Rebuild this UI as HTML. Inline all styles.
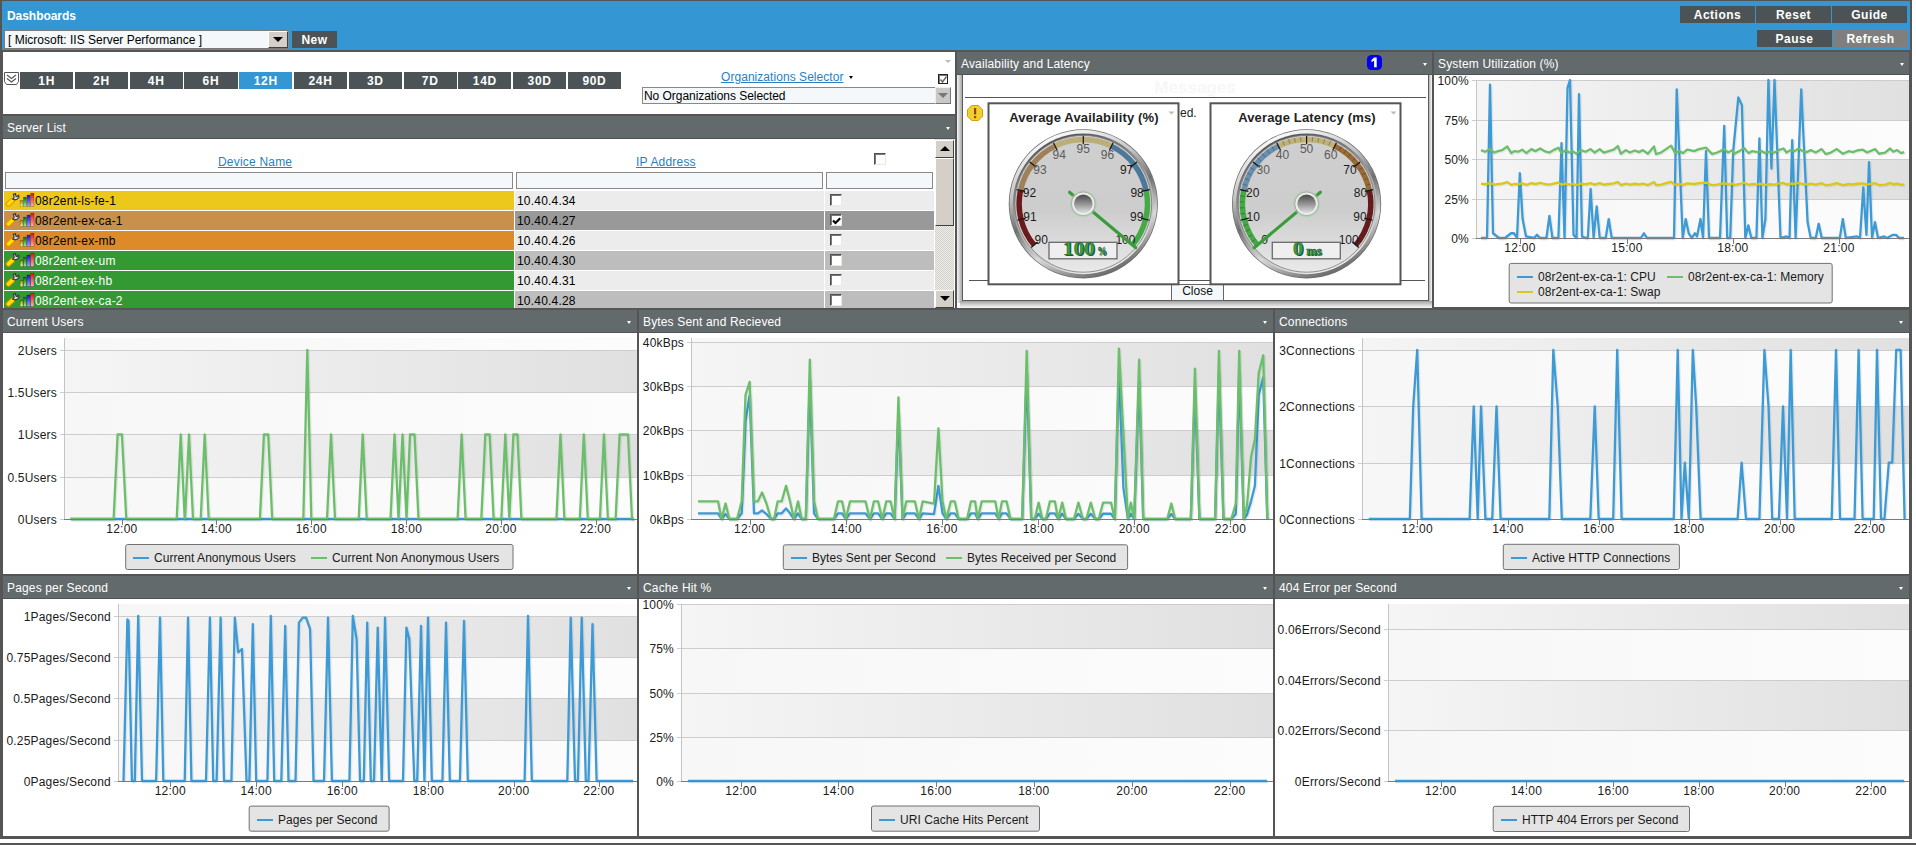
<!DOCTYPE html><html><head><meta charset="utf-8"><style>
*{margin:0;padding:0;box-sizing:border-box}
html,body{width:1916px;height:845px;overflow:hidden;background:#fff;font-family:"Liberation Sans",sans-serif;font-size:12px;color:#000}
.hdr{position:absolute;background:#636a6c;color:#fff;font-size:12px;line-height:24px;padding-left:4px;white-space:nowrap;letter-spacing:0.15px;border-bottom:1px solid #4f5355}
.tri{position:absolute;width:0;height:0;border-left:2.5px solid transparent;border-right:2.5px solid transparent;border-top:3px solid #fff}
.btn{position:absolute;background:#4b5356;color:#fff;font-weight:bold;font-size:12px;text-align:center;white-space:nowrap}
.cb{position:absolute;width:12px;height:12px;border:1px solid;border-color:#505050 #ece9e2 #ece9e2 #505050;box-shadow:inset 1px 1px 0 #7a7a7a;background:#fff}
</style></head><body><div style="position:absolute;left:0;top:0;width:1912px;height:839px;background:#555555"></div><div style="position:absolute;left:0;top:843px;width:1916px;height:2px;background:#555555"></div><div style="position:absolute;left:2px;top:1px;width:1908px;height:49px;background:#3497d4"></div><div style="position:absolute;left:7px;top:9px;white-space:nowrap;color:#fff;font-weight:bold;font-size:12px;line-height:14px;letter-spacing:-0.05px">Dashboards</div><div style="position:absolute;left:4px;top:30px;width:285px;height:19px;background:#f4f8fa;border:1px solid #7a7a7a;border-right-color:#888;"></div><div style="position:absolute;left:8px;top:33px;white-space:nowrap;font-size:12px;line-height:14px;color:#000;letter-spacing:0px">[ Microsoft: IIS Server Performance ]</div><div style="position:absolute;left:268px;top:31px;width:20px;height:17px;background:#d4d0c8;border:1px solid;border-color:#fff #404040 #404040 #fff"></div><div style="position:absolute;left:273px;top:37px;width:0;height:0;border-left:5px solid transparent;border-right:5px solid transparent;border-top:5px solid #000"></div><div class="btn" style="left:292px;top:31px;width:45px;height:17px;line-height:19px;letter-spacing:0.5px">New</div><div class="btn" style="left:1680px;top:6px;width:75px;height:17px;line-height:19px;font-size:12px;letter-spacing:0.5px">Actions</div><div class="btn" style="left:1756px;top:6px;width:75px;height:17px;line-height:19px;font-size:12px;letter-spacing:0.5px">Reset</div><div class="btn" style="left:1832px;top:6px;width:75px;height:17px;line-height:19px;font-size:12px;letter-spacing:0.5px">Guide</div><div class="btn" style="left:1757px;top:30px;width:75px;height:17px;line-height:19px;font-size:12px;letter-spacing:0.5px">Pause</div><div class="btn" style="left:1833px;top:30px;width:75px;height:17px;line-height:19px;font-size:12px;letter-spacing:0.5px;background:#7f7f7f">Refresh</div><div style="position:absolute;left:3px;top:52px;width:952px;height:62px;background:#fff"></div><svg style="position:absolute;left:4px;top:72px" width="15" height="14" viewBox="0 0 15 14"><path d="M0.5 0.5 H14.5 V9.5 L12.5 12.5 H2.5 L0.5 9.5 Z" fill="#fff" stroke="#555" stroke-width="1"/><path d="M3 3 L7.5 6.5 L12 3 M3 6.5 L7.5 10 L12 6.5" fill="none" stroke="#555" stroke-width="1.2"/></svg><div class="btn" style="left:20.0px;top:72px;width:53.3px;height:17px;line-height:19px;background:#4b5356;font-size:12px;letter-spacing:0.7px">1H</div><div class="btn" style="left:74.8px;top:72px;width:53.3px;height:17px;line-height:19px;background:#4b5356;font-size:12px;letter-spacing:0.7px">2H</div><div class="btn" style="left:129.6px;top:72px;width:53.3px;height:17px;line-height:19px;background:#4b5356;font-size:12px;letter-spacing:0.7px">4H</div><div class="btn" style="left:184.3px;top:72px;width:53.3px;height:17px;line-height:19px;background:#4b5356;font-size:12px;letter-spacing:0.7px">6H</div><div class="btn" style="left:239.1px;top:72px;width:53.3px;height:17px;line-height:19px;background:#3497d4;font-size:12px;letter-spacing:0.7px">12H</div><div class="btn" style="left:293.9px;top:72px;width:53.3px;height:17px;line-height:19px;background:#4b5356;font-size:12px;letter-spacing:0.7px">24H</div><div class="btn" style="left:348.7px;top:72px;width:53.3px;height:17px;line-height:19px;background:#4b5356;font-size:12px;letter-spacing:0.7px">3D</div><div class="btn" style="left:403.5px;top:72px;width:53.3px;height:17px;line-height:19px;background:#4b5356;font-size:12px;letter-spacing:0.7px">7D</div><div class="btn" style="left:458.2px;top:72px;width:53.3px;height:17px;line-height:19px;background:#4b5356;font-size:12px;letter-spacing:0.7px">14D</div><div class="btn" style="left:513.0px;top:72px;width:53.3px;height:17px;line-height:19px;background:#4b5356;font-size:12px;letter-spacing:0.7px">30D</div><div class="btn" style="left:567.8px;top:72px;width:53.3px;height:17px;line-height:19px;background:#4b5356;font-size:12px;letter-spacing:0.7px">90D</div><div style="position:absolute;left:721px;top:70px;white-space:nowrap;color:#2a7fc0;font-size:12px;line-height:14px;letter-spacing:0.05px"><u>Organizations Selector</u></div><div style="position:absolute;left:849px;top:76px;width:0;height:0;border-left:2.5px solid transparent;border-right:2.5px solid transparent;border-top:3px solid #000"></div><div style="position:absolute;left:945px;top:60px;width:0;height:0;border-left:3px solid transparent;border-right:3px solid transparent;border-top:3px solid #bbb"></div><div class="cb" style="left:938px;top:74px;width:10px;height:10px;border-color:#222"></div><svg style="position:absolute;left:939px;top:75px" width="9" height="9"><path d="M1.5 4.5 L3.5 7 L7.5 1.5" fill="none" stroke="#666" stroke-width="1.4"/></svg><div style="position:absolute;left:642px;top:87px;width:294px;height:17px;background:#f4f8fa;border:1px solid #888"></div><div style="position:absolute;left:644px;top:89px;white-space:nowrap;font-size:12px;line-height:14px;letter-spacing:-0.05px">No Organizations Selected</div><div style="position:absolute;left:935px;top:87px;width:16px;height:17px;background:#c8c8c8;border:1px solid;border-color:#eee #777 #777 #eee"></div><div style="position:absolute;left:938px;top:93px;width:0;height:0;border-left:5px solid transparent;border-right:5px solid transparent;border-top:5px solid #777"></div><div class="hdr" style="left:3px;top:116px;width:952px;height:23px">Server List</div><div class="tri" style="left:946px;top:127px"></div><div style="position:absolute;left:3px;top:139px;width:952px;height:169px;background:#fff"></div><div style="position:absolute;left:218px;top:155px;white-space:nowrap;color:#2a7fc0;font-size:12px;line-height:14px;letter-spacing:0.2px"><u>Device Name</u></div><div style="position:absolute;left:636px;top:155px;white-space:nowrap;color:#2a7fc0;font-size:12px;line-height:14px;letter-spacing:0.2px"><u>IP Address</u></div><div class="cb" style="left:874px;top:153px;width:12px;height:12px"></div><div style="position:absolute;left:5px;top:172px;width:508px;height:17px;background:#f4f8fa;border:1px solid #888"></div><div style="position:absolute;left:516px;top:172px;width:307px;height:17px;background:#f4f8fa;border:1px solid #888"></div><div style="position:absolute;left:826px;top:172px;width:107px;height:17px;background:#f4f8fa;border:1px solid #888"></div><svg width="0" height="0" style="position:absolute"><defs><linearGradient id="ibY" x1="0" x2="0" y1="0" y2="1"><stop offset="0" stop-color="#9a9a00"/><stop offset="1" stop-color="#ffff90"/></linearGradient><linearGradient id="ibG" x1="0" x2="0" y1="0" y2="1"><stop offset="0" stop-color="#006a00"/><stop offset="1" stop-color="#a0f0a0"/></linearGradient><linearGradient id="ibB" x1="0" x2="0" y1="0" y2="1"><stop offset="0" stop-color="#1010e0"/><stop offset="1" stop-color="#a0a8ff"/></linearGradient><linearGradient id="ibR" x1="0" x2="0" y1="0" y2="1"><stop offset="0" stop-color="#e01010"/><stop offset="1" stop-color="#ffb0b0"/></linearGradient></defs></svg><div style="position:absolute;left:4px;top:191px;width:510px;height:19px;background:#ecc81c"></div><svg style="position:absolute;left:3px;top:188px" width="32" height="22" viewBox="0 0 32 22"><path d="M5.4 15.9 L9.2 12.5" stroke="#f08a00" stroke-width="5.4" stroke-linecap="round"/><path d="M5.4 15.9 L9.2 12.5" stroke="#ffe400" stroke-width="3.4" stroke-linecap="round"/><path d="M9.6 11.2 L11.2 9.6 L10.4 6.4 L12.6 5.6 L12.8 8 L14.2 8.6 L15.6 7.2 L16 9.4 L13.8 11.4 L11.4 11.8 Z" fill="#e0e0e0" stroke="#3a3a3a" stroke-width="1.2" stroke-linejoin="round"/><rect x="17.2" y="12.6" width="2.7" height="5.8" fill="url(#ibY)" stroke="rgba(0,0,0,0.35)" stroke-width="0.6"/><rect x="20.5" y="9.2" width="2.9" height="9.2" fill="url(#ibG)" stroke="rgba(0,0,0,0.35)" stroke-width="0.6"/><rect x="24" y="7.1" width="3.2" height="11.3" fill="url(#ibB)" stroke="rgba(0,0,0,0.35)" stroke-width="0.6"/><rect x="27.7" y="5.2" width="3.3" height="13.2" fill="url(#ibR)" stroke="rgba(0,0,0,0.35)" stroke-width="0.6"/></svg><div style="position:absolute;left:35px;top:194px;white-space:nowrap;color:#000;font-size:12px;line-height:15px;letter-spacing:0.2px">08r2ent-ls-fe-1</div><div style="position:absolute;left:515px;top:191px;width:309px;height:19px;background:#ececec"></div><div style="position:absolute;left:517px;top:194px;white-space:nowrap;font-size:12px;line-height:15px;letter-spacing:0.2px">10.40.4.34</div><div style="position:absolute;left:825px;top:191px;width:109px;height:19px;background:#ececec"></div><div class="cb" style="left:830px;top:194px;width:12px;height:12px"></div><div style="position:absolute;left:4px;top:211px;width:510px;height:19px;background:#c8904a"></div><svg style="position:absolute;left:3px;top:208px" width="32" height="22" viewBox="0 0 32 22"><path d="M5.4 15.9 L9.2 12.5" stroke="#f08a00" stroke-width="5.4" stroke-linecap="round"/><path d="M5.4 15.9 L9.2 12.5" stroke="#ffe400" stroke-width="3.4" stroke-linecap="round"/><path d="M9.6 11.2 L11.2 9.6 L10.4 6.4 L12.6 5.6 L12.8 8 L14.2 8.6 L15.6 7.2 L16 9.4 L13.8 11.4 L11.4 11.8 Z" fill="#e0e0e0" stroke="#3a3a3a" stroke-width="1.2" stroke-linejoin="round"/><rect x="17.2" y="12.6" width="2.7" height="5.8" fill="url(#ibY)" stroke="rgba(0,0,0,0.35)" stroke-width="0.6"/><rect x="20.5" y="9.2" width="2.9" height="9.2" fill="url(#ibG)" stroke="rgba(0,0,0,0.35)" stroke-width="0.6"/><rect x="24" y="7.1" width="3.2" height="11.3" fill="url(#ibB)" stroke="rgba(0,0,0,0.35)" stroke-width="0.6"/><rect x="27.7" y="5.2" width="3.3" height="13.2" fill="url(#ibR)" stroke="rgba(0,0,0,0.35)" stroke-width="0.6"/></svg><div style="position:absolute;left:35px;top:214px;white-space:nowrap;color:#000;font-size:12px;line-height:15px;letter-spacing:0.2px">08r2ent-ex-ca-1</div><div style="position:absolute;left:515px;top:211px;width:309px;height:19px;background:#999999"></div><div style="position:absolute;left:517px;top:214px;white-space:nowrap;font-size:12px;line-height:15px;letter-spacing:0.2px">10.40.4.27</div><div style="position:absolute;left:825px;top:211px;width:109px;height:19px;background:#999999"></div><div class="cb" style="left:830px;top:214px;width:12px;height:12px"></div><svg style="position:absolute;left:832px;top:216px" width="10" height="10"><path d="M1 4.5 L3.5 7 L8.2 2.2" fill="none" stroke="#000" stroke-width="2.2"/></svg><div style="position:absolute;left:4px;top:231px;width:510px;height:19px;background:#dc8a2a"></div><svg style="position:absolute;left:3px;top:228px" width="32" height="22" viewBox="0 0 32 22"><path d="M5.4 15.9 L9.2 12.5" stroke="#f08a00" stroke-width="5.4" stroke-linecap="round"/><path d="M5.4 15.9 L9.2 12.5" stroke="#ffe400" stroke-width="3.4" stroke-linecap="round"/><path d="M9.6 11.2 L11.2 9.6 L10.4 6.4 L12.6 5.6 L12.8 8 L14.2 8.6 L15.6 7.2 L16 9.4 L13.8 11.4 L11.4 11.8 Z" fill="#e0e0e0" stroke="#3a3a3a" stroke-width="1.2" stroke-linejoin="round"/><rect x="17.2" y="12.6" width="2.7" height="5.8" fill="url(#ibY)" stroke="rgba(0,0,0,0.35)" stroke-width="0.6"/><rect x="20.5" y="9.2" width="2.9" height="9.2" fill="url(#ibG)" stroke="rgba(0,0,0,0.35)" stroke-width="0.6"/><rect x="24" y="7.1" width="3.2" height="11.3" fill="url(#ibB)" stroke="rgba(0,0,0,0.35)" stroke-width="0.6"/><rect x="27.7" y="5.2" width="3.3" height="13.2" fill="url(#ibR)" stroke="rgba(0,0,0,0.35)" stroke-width="0.6"/></svg><div style="position:absolute;left:35px;top:234px;white-space:nowrap;color:#000;font-size:12px;line-height:15px;letter-spacing:0.2px">08r2ent-ex-mb</div><div style="position:absolute;left:515px;top:231px;width:309px;height:19px;background:#ececec"></div><div style="position:absolute;left:517px;top:234px;white-space:nowrap;font-size:12px;line-height:15px;letter-spacing:0.2px">10.40.4.26</div><div style="position:absolute;left:825px;top:231px;width:109px;height:19px;background:#ececec"></div><div class="cb" style="left:830px;top:234px;width:12px;height:12px"></div><div style="position:absolute;left:4px;top:251px;width:510px;height:19px;background:#339933"></div><svg style="position:absolute;left:3px;top:248px" width="32" height="22" viewBox="0 0 32 22"><path d="M5.4 15.9 L9.2 12.5" stroke="#f08a00" stroke-width="5.4" stroke-linecap="round"/><path d="M5.4 15.9 L9.2 12.5" stroke="#ffe400" stroke-width="3.4" stroke-linecap="round"/><path d="M9.6 11.2 L11.2 9.6 L10.4 6.4 L12.6 5.6 L12.8 8 L14.2 8.6 L15.6 7.2 L16 9.4 L13.8 11.4 L11.4 11.8 Z" fill="#e0e0e0" stroke="#3a3a3a" stroke-width="1.2" stroke-linejoin="round"/><rect x="17.2" y="12.6" width="2.7" height="5.8" fill="url(#ibY)" stroke="rgba(0,0,0,0.35)" stroke-width="0.6"/><rect x="20.5" y="9.2" width="2.9" height="9.2" fill="url(#ibG)" stroke="rgba(0,0,0,0.35)" stroke-width="0.6"/><rect x="24" y="7.1" width="3.2" height="11.3" fill="url(#ibB)" stroke="rgba(0,0,0,0.35)" stroke-width="0.6"/><rect x="27.7" y="5.2" width="3.3" height="13.2" fill="url(#ibR)" stroke="rgba(0,0,0,0.35)" stroke-width="0.6"/></svg><div style="position:absolute;left:35px;top:254px;white-space:nowrap;color:#fff;font-size:12px;line-height:15px;letter-spacing:0.2px">08r2ent-ex-um</div><div style="position:absolute;left:515px;top:251px;width:309px;height:19px;background:#bdbdbd"></div><div style="position:absolute;left:517px;top:254px;white-space:nowrap;font-size:12px;line-height:15px;letter-spacing:0.2px">10.40.4.30</div><div style="position:absolute;left:825px;top:251px;width:109px;height:19px;background:#bdbdbd"></div><div class="cb" style="left:830px;top:254px;width:12px;height:12px"></div><div style="position:absolute;left:4px;top:271px;width:510px;height:19px;background:#339933"></div><svg style="position:absolute;left:3px;top:268px" width="32" height="22" viewBox="0 0 32 22"><path d="M5.4 15.9 L9.2 12.5" stroke="#f08a00" stroke-width="5.4" stroke-linecap="round"/><path d="M5.4 15.9 L9.2 12.5" stroke="#ffe400" stroke-width="3.4" stroke-linecap="round"/><path d="M9.6 11.2 L11.2 9.6 L10.4 6.4 L12.6 5.6 L12.8 8 L14.2 8.6 L15.6 7.2 L16 9.4 L13.8 11.4 L11.4 11.8 Z" fill="#e0e0e0" stroke="#3a3a3a" stroke-width="1.2" stroke-linejoin="round"/><rect x="17.2" y="12.6" width="2.7" height="5.8" fill="url(#ibY)" stroke="rgba(0,0,0,0.35)" stroke-width="0.6"/><rect x="20.5" y="9.2" width="2.9" height="9.2" fill="url(#ibG)" stroke="rgba(0,0,0,0.35)" stroke-width="0.6"/><rect x="24" y="7.1" width="3.2" height="11.3" fill="url(#ibB)" stroke="rgba(0,0,0,0.35)" stroke-width="0.6"/><rect x="27.7" y="5.2" width="3.3" height="13.2" fill="url(#ibR)" stroke="rgba(0,0,0,0.35)" stroke-width="0.6"/></svg><div style="position:absolute;left:35px;top:274px;white-space:nowrap;color:#fff;font-size:12px;line-height:15px;letter-spacing:0.2px">08r2ent-ex-hb</div><div style="position:absolute;left:515px;top:271px;width:309px;height:19px;background:#ececec"></div><div style="position:absolute;left:517px;top:274px;white-space:nowrap;font-size:12px;line-height:15px;letter-spacing:0.2px">10.40.4.31</div><div style="position:absolute;left:825px;top:271px;width:109px;height:19px;background:#ececec"></div><div class="cb" style="left:830px;top:274px;width:12px;height:12px"></div><div style="position:absolute;left:4px;top:291px;width:510px;height:17px;background:#339933"></div><svg style="position:absolute;left:3px;top:288px" width="32" height="22" viewBox="0 0 32 22"><path d="M5.4 15.9 L9.2 12.5" stroke="#f08a00" stroke-width="5.4" stroke-linecap="round"/><path d="M5.4 15.9 L9.2 12.5" stroke="#ffe400" stroke-width="3.4" stroke-linecap="round"/><path d="M9.6 11.2 L11.2 9.6 L10.4 6.4 L12.6 5.6 L12.8 8 L14.2 8.6 L15.6 7.2 L16 9.4 L13.8 11.4 L11.4 11.8 Z" fill="#e0e0e0" stroke="#3a3a3a" stroke-width="1.2" stroke-linejoin="round"/><rect x="17.2" y="12.6" width="2.7" height="5.8" fill="url(#ibY)" stroke="rgba(0,0,0,0.35)" stroke-width="0.6"/><rect x="20.5" y="9.2" width="2.9" height="9.2" fill="url(#ibG)" stroke="rgba(0,0,0,0.35)" stroke-width="0.6"/><rect x="24" y="7.1" width="3.2" height="11.3" fill="url(#ibB)" stroke="rgba(0,0,0,0.35)" stroke-width="0.6"/><rect x="27.7" y="5.2" width="3.3" height="13.2" fill="url(#ibR)" stroke="rgba(0,0,0,0.35)" stroke-width="0.6"/></svg><div style="position:absolute;left:35px;top:294px;white-space:nowrap;color:#fff;font-size:12px;line-height:15px;letter-spacing:0.2px">08r2ent-ex-ca-2</div><div style="position:absolute;left:515px;top:291px;width:309px;height:17px;background:#bdbdbd"></div><div style="position:absolute;left:517px;top:294px;white-space:nowrap;font-size:12px;line-height:15px;letter-spacing:0.2px">10.40.4.28</div><div style="position:absolute;left:825px;top:291px;width:109px;height:17px;background:#bdbdbd"></div><div class="cb" style="left:830px;top:294px;width:12px;height:12px"></div><div style="position:absolute;left:935px;top:139px;width:19px;height:169px;background:repeating-conic-gradient(#eee 0 25%, #d4d0c8 0 50%) 0 0/2px 2px"></div><div style="position:absolute;left:935px;top:140px;width:19px;height:18px;background:#d4d0c8;border:1px solid;border-color:#fff #404040 #404040 #fff"></div><div style="position:absolute;left:940px;top:146px;width:0;height:0;border-left:5px solid transparent;border-right:5px solid transparent;border-bottom:5px solid #000"></div><div style="position:absolute;left:935px;top:158px;width:19px;height:68px;background:#d4d0c8;border:1px solid;border-color:#fff #404040 #404040 #fff"></div><div style="position:absolute;left:935px;top:290px;width:19px;height:18px;background:#d4d0c8;border:1px solid;border-color:#fff #404040 #404040 #fff"></div><div style="position:absolute;left:940px;top:296px;width:0;height:0;border-left:5px solid transparent;border-right:5px solid transparent;border-top:5px solid #000"></div><div class="hdr" style="left:957px;top:52px;width:475px;height:23px">Availability and Latency</div><div class="tri" style="left:1423px;top:63px"></div><div style="position:absolute;left:957px;top:75px;width:475px;height:233px;background:#fff"></div><div class="hdr" style="left:1434px;top:52px;width:475px;height:23px">System Utilization (%)</div><div class="tri" style="left:1900px;top:63px"></div><div style="position:absolute;left:1434px;top:75px;width:475px;height:232px;background:#fff"></div><div class="hdr" style="left:3px;top:310px;width:634px;height:23px">Current Users</div><div class="tri" style="left:627px;top:321px"></div><div style="position:absolute;left:3px;top:333px;width:634px;height:241px;background:#fff"></div><div class="hdr" style="left:639px;top:310px;width:634px;height:23px">Bytes Sent and Recieved</div><div class="tri" style="left:1263px;top:321px"></div><div style="position:absolute;left:639px;top:333px;width:634px;height:241px;background:#fff"></div><div class="hdr" style="left:1275px;top:310px;width:634px;height:23px">Connections</div><div class="tri" style="left:1899px;top:321px"></div><div style="position:absolute;left:1275px;top:333px;width:634px;height:241px;background:#fff"></div><div class="hdr" style="left:3px;top:576px;width:634px;height:23px">Pages per Second</div><div class="tri" style="left:627px;top:587px"></div><div style="position:absolute;left:3px;top:599px;width:634px;height:237px;background:#fff"></div><div class="hdr" style="left:639px;top:576px;width:634px;height:23px">Cache Hit %</div><div class="tri" style="left:1263px;top:587px"></div><div style="position:absolute;left:639px;top:599px;width:634px;height:237px;background:#fff"></div><div class="hdr" style="left:1275px;top:576px;width:634px;height:23px">404 Error per Second</div><div class="tri" style="left:1899px;top:587px"></div><div style="position:absolute;left:1275px;top:599px;width:634px;height:237px;background:#fff"></div><svg style="position:absolute;left:957px;top:75px" width="475" height="233" viewBox="957 75 475 233"><defs><linearGradient id="shl" x1="0" x2="1" y1="0" y2="0"><stop offset="0" stop-color="#f4f4f4"/><stop offset="0.5" stop-color="#cfcfcf"/><stop offset="1" stop-color="#a8a8a8"/></linearGradient><linearGradient id="shr" x1="0" x2="1" y1="0" y2="0"><stop offset="0" stop-color="#b0b0b0"/><stop offset="0.5" stop-color="#d8d8d8"/><stop offset="1" stop-color="#f8f8f8"/></linearGradient><linearGradient id="shb" x1="0" x2="0" y1="0" y2="1"><stop offset="0" stop-color="#a0a0a0"/><stop offset="0.5" stop-color="#d0d0d0"/><stop offset="1" stop-color="#f8f8f8"/></linearGradient></defs><rect x="957" y="74" width="475" height="234" fill="#fff"/><rect x="957" y="74" width="5" height="229" fill="url(#shl)"/><rect x="1429" y="75" width="3" height="229" fill="url(#shr)"/><rect x="960" y="301" width="472" height="7" fill="url(#shb)"/><rect x="962.5" y="74.5" width="466" height="226" fill="#fff" stroke="#5a5a5a" stroke-width="1"/><text x="1195" y="92.5" text-anchor="middle" font-size="17" font-weight="bold" font-family="Liberation Sans, sans-serif" fill="#f7f7f7">Messages</text><line x1="965" x2="1426" y1="97.5" y2="97.5" stroke="#555" stroke-width="1"/><line x1="969" x2="1425" y1="280.5" y2="280.5" stroke="#555" stroke-width="1"/><path d="M971.7 105.5 H978.3 L982.5 109.7 V116.3 L978.3 120.5 H971.7 L967.5 116.3 V109.7 Z" fill="#f2cf2e" stroke="#d89a1a" stroke-width="1"/><rect x="974" y="108" width="2.2" height="6.5" fill="#8a4a10"/><rect x="974" y="116" width="2.2" height="2.2" fill="#8a4a10"/><text x="1180" y="117" font-size="12" font-family="Liberation Sans, sans-serif" fill="#222">ed.</text><rect x="1171.5" y="284.5" width="52" height="16" fill="#f4f8fa" stroke="#666" stroke-width="1"/><text x="1197.5" y="295" text-anchor="middle" font-size="12" font-family="Liberation Sans, sans-serif" fill="#111">Close</text><rect x="988.5" y="103.3" width="190" height="181" fill="#fff" stroke="#555" stroke-width="2"/><text x="1084" y="122" text-anchor="middle" font-size="13" font-weight="bold" letter-spacing="0.15" font-family="Liberation Sans, sans-serif" fill="#222">Average Availability (%)</text><path d="M1168.5 111.5 h6 l-3 3 z" fill="#bbb"/><rect x="1210.5" y="103.3" width="190" height="181" fill="#fff" stroke="#555" stroke-width="2"/><text x="1307" y="122" text-anchor="middle" font-size="13" font-weight="bold" letter-spacing="0.15" font-family="Liberation Sans, sans-serif" fill="#222">Average Latency (ms)</text><path d="M1390.5 111.5 h6 l-3 3 z" fill="#bbb"/><defs><linearGradient id="bza" x1="0.3" y1="0" x2="0.7" y2="1"><stop offset="0" stop-color="#ffffff"/><stop offset="0.3" stop-color="#c4c4c4"/><stop offset="0.5" stop-color="#707070"/><stop offset="0.72" stop-color="#dadada"/><stop offset="1" stop-color="#5c5c5c"/></linearGradient><linearGradient id="bia" x1="0.3" y1="0" x2="0.7" y2="1"><stop offset="0" stop-color="#505050"/><stop offset="0.5" stop-color="#a8a8a8"/><stop offset="1" stop-color="#f2f2f2"/></linearGradient><linearGradient id="fca" x1="0" y1="0" x2="0" y2="1"><stop offset="0" stop-color="#cfcfcf"/><stop offset="0.55" stop-color="#cdcdcd"/><stop offset="1" stop-color="#e9e9e9"/></linearGradient><linearGradient id="hba" x1="0" y1="0" x2="0" y2="1"><stop offset="0" stop-color="#4a4a4a"/><stop offset="0.55" stop-color="#9a9a9a"/><stop offset="1" stop-color="#e0e0e0"/></linearGradient></defs><circle cx="1083.3" cy="203.8" r="74.6" fill="#6e6e6e"/><circle cx="1083.3" cy="203.8" r="73.8" fill="url(#bza)"/><circle cx="1083.3" cy="203.8" r="70.39999999999999" fill="url(#bia)"/><circle cx="1083.3" cy="203.8" r="68.39999999999999" fill="url(#fca)" stroke="#7a7a7a" stroke-width="0.8"/><path d="M1034.12 245.07 A64.2 64.2 0 0 1 1020.50 190.45" fill="none" stroke="#6a1a1a" stroke-width="5.5"/><path d="M1020.50 190.45 A64.2 64.2 0 0 1 1055.16 146.10" fill="none" stroke="#a08058" stroke-width="5.5"/><path d="M1055.16 146.10 A64.2 64.2 0 0 1 1111.44 146.10" fill="none" stroke="#bcae78" stroke-width="5.5"/><path d="M1111.44 146.10 A64.2 64.2 0 0 1 1146.10 190.45" fill="none" stroke="#4d7898" stroke-width="5.5"/><path d="M1146.10 190.45 A64.2 64.2 0 0 1 1132.48 245.07" fill="none" stroke="#45aa45" stroke-width="5.5"/><line x1="1031.21" y1="247.51" x2="1037.72" y2="242.05" stroke="#151515" stroke-width="1.2"/><text x="1041.2" y="243.5" text-anchor="middle" font-size="12" font-family="Liberation Sans, sans-serif" fill="#1c1c1c">90</text><line x1="1017.32" y1="220.25" x2="1025.57" y2="218.19" stroke="#151515" stroke-width="1.2"/><text x="1029.9" y="221.4" text-anchor="middle" font-size="12" font-family="Liberation Sans, sans-serif" fill="#1c1c1c">91</text><line x1="1016.79" y1="189.66" x2="1025.10" y2="191.43" stroke="#151515" stroke-width="1.2"/><text x="1029.5" y="196.7" text-anchor="middle" font-size="12" font-family="Liberation Sans, sans-serif" fill="#1c1c1c">92</text><line x1="1029.72" y1="161.94" x2="1036.41" y2="167.17" stroke="#151515" stroke-width="1.2"/><text x="1040.0" y="174.2" text-anchor="middle" font-size="12" font-family="Liberation Sans, sans-serif" fill="#5a5a5a">93</text><line x1="1053.49" y1="142.68" x2="1057.22" y2="150.32" stroke="#151515" stroke-width="1.2"/><text x="1059.2" y="158.7" text-anchor="middle" font-size="12" font-family="Liberation Sans, sans-serif" fill="#5a5a5a">94</text><line x1="1083.30" y1="135.80" x2="1083.30" y2="144.30" stroke="#151515" stroke-width="1.2"/><text x="1083.3" y="153.1" text-anchor="middle" font-size="12" font-family="Liberation Sans, sans-serif" fill="#5a5a5a">95</text><line x1="1113.11" y1="142.68" x2="1109.38" y2="150.32" stroke="#151515" stroke-width="1.2"/><text x="1107.4" y="158.7" text-anchor="middle" font-size="12" font-family="Liberation Sans, sans-serif" fill="#5a5a5a">96</text><line x1="1136.88" y1="161.94" x2="1130.19" y2="167.17" stroke="#151515" stroke-width="1.2"/><text x="1126.6" y="174.2" text-anchor="middle" font-size="12" font-family="Liberation Sans, sans-serif" fill="#1c1c1c">97</text><line x1="1149.81" y1="189.66" x2="1141.50" y2="191.43" stroke="#151515" stroke-width="1.2"/><text x="1137.1" y="196.7" text-anchor="middle" font-size="12" font-family="Liberation Sans, sans-serif" fill="#1c1c1c">98</text><line x1="1149.28" y1="220.25" x2="1141.03" y2="218.19" stroke="#151515" stroke-width="1.2"/><text x="1136.7" y="221.4" text-anchor="middle" font-size="12" font-family="Liberation Sans, sans-serif" fill="#1c1c1c">99</text><line x1="1135.39" y1="247.51" x2="1128.88" y2="242.05" stroke="#151515" stroke-width="1.2"/><text x="1125.4" y="243.5" text-anchor="middle" font-size="12" font-family="Liberation Sans, sans-serif" fill="#1c1c1c">100</text><rect x="1049.0" y="242.3" width="68" height="16.5" fill="#efefef" stroke="#6a6a6a" stroke-width="1.3"/><line x1="1069.51" y1="192.23" x2="1135.77" y2="247.83" stroke="#3c9c3c" stroke-width="3.2" stroke-linecap="round"/><circle cx="1083.3" cy="203.8" r="13.4" fill="#9ad69a" opacity="0.5"/><circle cx="1083.3" cy="203.8" r="11.8" fill="#ececec" stroke="#8a8a8a" stroke-width="0.6"/><circle cx="1083.3" cy="203.8" r="9.3" fill="url(#hba)"/><text x="1064.0" y="256.3" font-family="Liberation Serif, serif" font-weight="bold" font-size="18" textLength="32" lengthAdjust="spacingAndGlyphs" fill="#1d4d6a" stroke="none" stroke-width="0.5">100</text><text x="1098.3" y="256.3" font-family="Liberation Serif, serif" font-weight="bold" font-size="12" textLength="9.5" lengthAdjust="spacingAndGlyphs" fill="#1d4d6a" stroke="none" stroke-width="0.4">%</text><text x="1063.0" y="255.3" font-family="Liberation Serif, serif" font-weight="bold" font-size="18" textLength="32" lengthAdjust="spacingAndGlyphs" fill="#3aa03a" stroke="#20601f" stroke-width="0.5">100</text><text x="1097.3" y="255.3" font-family="Liberation Serif, serif" font-weight="bold" font-size="12" textLength="9.5" lengthAdjust="spacingAndGlyphs" fill="#3aa03a" stroke="#20601f" stroke-width="0.4">%</text><defs><linearGradient id="bzb" x1="0.3" y1="0" x2="0.7" y2="1"><stop offset="0" stop-color="#ffffff"/><stop offset="0.3" stop-color="#c4c4c4"/><stop offset="0.5" stop-color="#707070"/><stop offset="0.72" stop-color="#dadada"/><stop offset="1" stop-color="#5c5c5c"/></linearGradient><linearGradient id="bib" x1="0.3" y1="0" x2="0.7" y2="1"><stop offset="0" stop-color="#505050"/><stop offset="0.5" stop-color="#a8a8a8"/><stop offset="1" stop-color="#f2f2f2"/></linearGradient><linearGradient id="fcb" x1="0" y1="0" x2="0" y2="1"><stop offset="0" stop-color="#cfcfcf"/><stop offset="0.55" stop-color="#cdcdcd"/><stop offset="1" stop-color="#e9e9e9"/></linearGradient><linearGradient id="hbb" x1="0" y1="0" x2="0" y2="1"><stop offset="0" stop-color="#4a4a4a"/><stop offset="0.55" stop-color="#9a9a9a"/><stop offset="1" stop-color="#e0e0e0"/></linearGradient></defs><circle cx="1306.6" cy="203.8" r="74.6" fill="#6e6e6e"/><circle cx="1306.6" cy="203.8" r="73.8" fill="url(#bzb)"/><circle cx="1306.6" cy="203.8" r="70.39999999999999" fill="url(#bib)"/><circle cx="1306.6" cy="203.8" r="68.39999999999999" fill="url(#fcb)" stroke="#7a7a7a" stroke-width="0.8"/><path d="M1257.42 245.07 A64.2 64.2 0 0 1 1243.80 190.45" fill="none" stroke="#45aa45" stroke-width="5.5"/><path d="M1243.80 190.45 A64.2 64.2 0 0 1 1278.46 146.10" fill="none" stroke="#6a90b0" stroke-width="5.5"/><path d="M1278.46 146.10 A64.2 64.2 0 0 1 1334.74 146.10" fill="none" stroke="#c0b276" stroke-width="5.5"/><path d="M1334.74 146.10 A64.2 64.2 0 0 1 1369.40 190.45" fill="none" stroke="#9a6a34" stroke-width="5.5"/><path d="M1369.40 190.45 A64.2 64.2 0 0 1 1355.78 245.07" fill="none" stroke="#6a1a1a" stroke-width="5.5"/><line x1="1255.28" y1="246.87" x2="1258.72" y2="243.97" stroke="#2a2a2a" stroke-width="0.7" opacity="0.55"/><line x1="1251.58" y1="242.04" x2="1255.28" y2="239.47" stroke="#2a2a2a" stroke-width="0.7" opacity="0.55"/><line x1="1248.34" y1="236.89" x2="1252.26" y2="234.67" stroke="#2a2a2a" stroke-width="0.7" opacity="0.55"/><line x1="1245.58" y1="231.48" x2="1249.68" y2="229.62" stroke="#2a2a2a" stroke-width="0.7" opacity="0.55"/><line x1="1243.33" y1="225.83" x2="1247.58" y2="224.35" stroke="#2a2a2a" stroke-width="0.7" opacity="0.55"/><line x1="1241.59" y1="220.01" x2="1245.96" y2="218.92" stroke="#2a2a2a" stroke-width="0.7" opacity="0.55"/><line x1="1240.39" y1="214.05" x2="1244.84" y2="213.36" stroke="#2a2a2a" stroke-width="0.7" opacity="0.55"/><line x1="1239.73" y1="208.01" x2="1244.22" y2="207.72" stroke="#2a2a2a" stroke-width="0.7" opacity="0.55"/><line x1="1239.63" y1="201.93" x2="1244.12" y2="202.05" stroke="#2a2a2a" stroke-width="0.7" opacity="0.55"/><line x1="1240.07" y1="195.87" x2="1244.54" y2="196.40" stroke="#2a2a2a" stroke-width="0.7" opacity="0.55"/><line x1="1241.06" y1="189.87" x2="1245.47" y2="190.81" stroke="#2a2a2a" stroke-width="0.7" opacity="0.55"/><line x1="1242.60" y1="183.99" x2="1246.90" y2="185.32" stroke="#2a2a2a" stroke-width="0.7" opacity="0.55"/><line x1="1244.66" y1="178.27" x2="1248.82" y2="179.98" stroke="#2a2a2a" stroke-width="0.7" opacity="0.55"/><line x1="1247.22" y1="172.76" x2="1251.21" y2="174.84" stroke="#2a2a2a" stroke-width="0.7" opacity="0.55"/><line x1="1250.28" y1="167.51" x2="1254.06" y2="169.94" stroke="#2a2a2a" stroke-width="0.7" opacity="0.55"/><line x1="1253.80" y1="162.55" x2="1257.35" y2="165.32" stroke="#2a2a2a" stroke-width="0.7" opacity="0.55"/><line x1="1257.76" y1="157.94" x2="1261.04" y2="161.02" stroke="#2a2a2a" stroke-width="0.7" opacity="0.55"/><line x1="1262.12" y1="153.70" x2="1265.10" y2="157.06" stroke="#2a2a2a" stroke-width="0.7" opacity="0.55"/><line x1="1266.84" y1="149.87" x2="1269.51" y2="153.49" stroke="#2a2a2a" stroke-width="0.7" opacity="0.55"/><line x1="1271.89" y1="146.49" x2="1274.22" y2="150.34" stroke="#2a2a2a" stroke-width="0.7" opacity="0.55"/><line x1="1277.23" y1="143.58" x2="1279.20" y2="147.63" stroke="#2a2a2a" stroke-width="0.7" opacity="0.55"/><line x1="1282.81" y1="141.17" x2="1284.41" y2="145.37" stroke="#2a2a2a" stroke-width="0.7" opacity="0.55"/><line x1="1288.58" y1="139.27" x2="1289.79" y2="143.60" stroke="#2a2a2a" stroke-width="0.7" opacity="0.55"/><line x1="1294.51" y1="137.90" x2="1295.32" y2="142.33" stroke="#2a2a2a" stroke-width="0.7" opacity="0.55"/><line x1="1300.53" y1="137.08" x2="1300.94" y2="141.56" stroke="#2a2a2a" stroke-width="0.7" opacity="0.55"/><line x1="1306.60" y1="136.80" x2="1306.60" y2="141.30" stroke="#2a2a2a" stroke-width="0.7" opacity="0.55"/><line x1="1312.67" y1="137.08" x2="1312.26" y2="141.56" stroke="#2a2a2a" stroke-width="0.7" opacity="0.55"/><line x1="1318.69" y1="137.90" x2="1317.88" y2="142.33" stroke="#2a2a2a" stroke-width="0.7" opacity="0.55"/><line x1="1324.62" y1="139.27" x2="1323.41" y2="143.60" stroke="#2a2a2a" stroke-width="0.7" opacity="0.55"/><line x1="1330.39" y1="141.17" x2="1328.79" y2="145.37" stroke="#2a2a2a" stroke-width="0.7" opacity="0.55"/><line x1="1335.97" y1="143.58" x2="1334.00" y2="147.63" stroke="#2a2a2a" stroke-width="0.7" opacity="0.55"/><line x1="1341.31" y1="146.49" x2="1338.98" y2="150.34" stroke="#2a2a2a" stroke-width="0.7" opacity="0.55"/><line x1="1346.36" y1="149.87" x2="1343.69" y2="153.49" stroke="#2a2a2a" stroke-width="0.7" opacity="0.55"/><line x1="1351.08" y1="153.70" x2="1348.10" y2="157.06" stroke="#2a2a2a" stroke-width="0.7" opacity="0.55"/><line x1="1355.44" y1="157.94" x2="1352.16" y2="161.02" stroke="#2a2a2a" stroke-width="0.7" opacity="0.55"/><line x1="1359.40" y1="162.55" x2="1355.85" y2="165.32" stroke="#2a2a2a" stroke-width="0.7" opacity="0.55"/><line x1="1362.92" y1="167.51" x2="1359.14" y2="169.94" stroke="#2a2a2a" stroke-width="0.7" opacity="0.55"/><line x1="1365.98" y1="172.76" x2="1361.99" y2="174.84" stroke="#2a2a2a" stroke-width="0.7" opacity="0.55"/><line x1="1368.54" y1="178.27" x2="1364.38" y2="179.98" stroke="#2a2a2a" stroke-width="0.7" opacity="0.55"/><line x1="1370.60" y1="183.99" x2="1366.30" y2="185.32" stroke="#2a2a2a" stroke-width="0.7" opacity="0.55"/><line x1="1372.14" y1="189.87" x2="1367.73" y2="190.81" stroke="#2a2a2a" stroke-width="0.7" opacity="0.55"/><line x1="1373.13" y1="195.87" x2="1368.66" y2="196.40" stroke="#2a2a2a" stroke-width="0.7" opacity="0.55"/><line x1="1373.57" y1="201.93" x2="1369.08" y2="202.05" stroke="#2a2a2a" stroke-width="0.7" opacity="0.55"/><line x1="1373.47" y1="208.01" x2="1368.98" y2="207.72" stroke="#2a2a2a" stroke-width="0.7" opacity="0.55"/><line x1="1372.81" y1="214.05" x2="1368.36" y2="213.36" stroke="#2a2a2a" stroke-width="0.7" opacity="0.55"/><line x1="1371.61" y1="220.01" x2="1367.24" y2="218.92" stroke="#2a2a2a" stroke-width="0.7" opacity="0.55"/><line x1="1369.87" y1="225.83" x2="1365.62" y2="224.35" stroke="#2a2a2a" stroke-width="0.7" opacity="0.55"/><line x1="1367.62" y1="231.48" x2="1363.52" y2="229.62" stroke="#2a2a2a" stroke-width="0.7" opacity="0.55"/><line x1="1364.86" y1="236.89" x2="1360.94" y2="234.67" stroke="#2a2a2a" stroke-width="0.7" opacity="0.55"/><line x1="1361.62" y1="242.04" x2="1357.92" y2="239.47" stroke="#2a2a2a" stroke-width="0.7" opacity="0.55"/><line x1="1357.92" y1="246.87" x2="1354.48" y2="243.97" stroke="#2a2a2a" stroke-width="0.7" opacity="0.55"/><line x1="1254.51" y1="247.51" x2="1261.02" y2="242.05" stroke="#151515" stroke-width="1.2"/><text x="1264.5" y="243.5" text-anchor="middle" font-size="12" font-family="Liberation Sans, sans-serif" fill="#1c1c1c">0</text><line x1="1240.62" y1="220.25" x2="1248.87" y2="218.19" stroke="#151515" stroke-width="1.2"/><text x="1253.2" y="221.4" text-anchor="middle" font-size="12" font-family="Liberation Sans, sans-serif" fill="#1c1c1c">10</text><line x1="1240.09" y1="189.66" x2="1248.40" y2="191.43" stroke="#151515" stroke-width="1.2"/><text x="1252.8" y="196.7" text-anchor="middle" font-size="12" font-family="Liberation Sans, sans-serif" fill="#1c1c1c">20</text><line x1="1253.02" y1="161.94" x2="1259.71" y2="167.17" stroke="#151515" stroke-width="1.2"/><text x="1263.3" y="174.2" text-anchor="middle" font-size="12" font-family="Liberation Sans, sans-serif" fill="#5a5a5a">30</text><line x1="1276.79" y1="142.68" x2="1280.52" y2="150.32" stroke="#151515" stroke-width="1.2"/><text x="1282.5" y="158.7" text-anchor="middle" font-size="12" font-family="Liberation Sans, sans-serif" fill="#5a5a5a">40</text><line x1="1306.60" y1="135.80" x2="1306.60" y2="144.30" stroke="#151515" stroke-width="1.2"/><text x="1306.6" y="153.1" text-anchor="middle" font-size="12" font-family="Liberation Sans, sans-serif" fill="#5a5a5a">50</text><line x1="1336.41" y1="142.68" x2="1332.68" y2="150.32" stroke="#151515" stroke-width="1.2"/><text x="1330.7" y="158.7" text-anchor="middle" font-size="12" font-family="Liberation Sans, sans-serif" fill="#5a5a5a">60</text><line x1="1360.18" y1="161.94" x2="1353.49" y2="167.17" stroke="#151515" stroke-width="1.2"/><text x="1349.9" y="174.2" text-anchor="middle" font-size="12" font-family="Liberation Sans, sans-serif" fill="#1c1c1c">70</text><line x1="1373.11" y1="189.66" x2="1364.80" y2="191.43" stroke="#151515" stroke-width="1.2"/><text x="1360.4" y="196.7" text-anchor="middle" font-size="12" font-family="Liberation Sans, sans-serif" fill="#1c1c1c">80</text><line x1="1372.58" y1="220.25" x2="1364.33" y2="218.19" stroke="#151515" stroke-width="1.2"/><text x="1360.0" y="221.4" text-anchor="middle" font-size="12" font-family="Liberation Sans, sans-serif" fill="#1c1c1c">90</text><line x1="1358.69" y1="247.51" x2="1352.18" y2="242.05" stroke="#151515" stroke-width="1.2"/><text x="1348.7" y="243.5" text-anchor="middle" font-size="12" font-family="Liberation Sans, sans-serif" fill="#1c1c1c">100</text><rect x="1272.3" y="242.3" width="68" height="16.5" fill="#efefef" stroke="#6a6a6a" stroke-width="1.3"/><line x1="1320.39" y1="192.23" x2="1254.13" y2="247.83" stroke="#3c9c3c" stroke-width="3.2" stroke-linecap="round"/><circle cx="1306.6" cy="203.8" r="13.4" fill="#9ad69a" opacity="0.5"/><circle cx="1306.6" cy="203.8" r="11.8" fill="#ececec" stroke="#8a8a8a" stroke-width="0.6"/><circle cx="1306.6" cy="203.8" r="9.3" fill="url(#hbb)"/><text x="1293.8999999999999" y="256.3" font-family="Liberation Serif, serif" font-weight="bold" font-size="18" textLength="10.5" lengthAdjust="spacingAndGlyphs" fill="#1d4d6a" stroke="none" stroke-width="0.5">0</text><text x="1307.3" y="256.3" font-family="Liberation Serif, serif" font-weight="bold" font-size="12" textLength="15.5" lengthAdjust="spacingAndGlyphs" fill="#1d4d6a" stroke="none" stroke-width="0.4">ms</text><text x="1292.8999999999999" y="255.3" font-family="Liberation Serif, serif" font-weight="bold" font-size="18" textLength="10.5" lengthAdjust="spacingAndGlyphs" fill="#3aa03a" stroke="#20601f" stroke-width="0.5">0</text><text x="1306.3" y="255.3" font-family="Liberation Serif, serif" font-weight="bold" font-size="12" textLength="15.5" lengthAdjust="spacingAndGlyphs" fill="#3aa03a" stroke="#20601f" stroke-width="0.4">ms</text></svg><svg style="position:absolute;left:1366px;top:54px" width="17" height="17" viewBox="1366 54 17 17"><rect x="1367" y="55" width="15" height="15" rx="4.5" fill="#0000f0"/><path d="M1374.1 57.6 H1376.7 V67.2 H1374.1 V60.6 L1371.5 62.2 V59.9 Z" fill="#fff"/></svg><svg style="position:absolute;left:3px;top:333px" width="634" height="241" viewBox="3 333 634 241"><defs><linearGradient id="g3_333d" x1="0" x2="1" y1="0" y2="0"><stop offset="0" stop-color="#f5f5f5"/><stop offset="1" stop-color="#e0e0e0"/></linearGradient><linearGradient id="g3_333l" x1="0" x2="1" y1="0" y2="0"><stop offset="0" stop-color="#f7f7f7"/><stop offset="1" stop-color="#fcfcfc"/></linearGradient></defs><rect x="65" y="477" width="572" height="42" fill="url(#g3_333l)"/><rect x="65" y="434" width="572" height="43" fill="url(#g3_333d)"/><rect x="65" y="392" width="572" height="42" fill="url(#g3_333l)"/><rect x="65" y="350" width="572" height="42" fill="url(#g3_333d)"/><rect x="65" y="338" width="572" height="12" fill="url(#g3_333l)"/><line x1="60" x2="637" y1="350.5" y2="350.5" stroke="#cdcdcd" stroke-width="1"/><text x="57" y="355" text-anchor="end" font-size="12" letter-spacing="0.2" font-family="Liberation Sans, sans-serif" fill="#1a1a1a">2Users</text><line x1="60" x2="637" y1="392.5" y2="392.5" stroke="#cdcdcd" stroke-width="1"/><text x="57" y="397" text-anchor="end" font-size="12" letter-spacing="0.2" font-family="Liberation Sans, sans-serif" fill="#1a1a1a">1.5Users</text><line x1="60" x2="637" y1="434.5" y2="434.5" stroke="#cdcdcd" stroke-width="1"/><text x="57" y="439" text-anchor="end" font-size="12" letter-spacing="0.2" font-family="Liberation Sans, sans-serif" fill="#1a1a1a">1Users</text><line x1="60" x2="637" y1="477.5" y2="477.5" stroke="#cdcdcd" stroke-width="1"/><text x="57" y="482" text-anchor="end" font-size="12" letter-spacing="0.2" font-family="Liberation Sans, sans-serif" fill="#1a1a1a">0.5Users</text><line x1="60" x2="64" y1="519.5" y2="519.5" stroke="#cdcdcd" stroke-width="1"/><text x="57" y="524" text-anchor="end" font-size="12" letter-spacing="0.2" font-family="Liberation Sans, sans-serif" fill="#1a1a1a">0Users</text><line x1="64.5" x2="64.5" y1="338" y2="520" stroke="#c4c4c4" stroke-width="1"/><path d="M70.4 519.00 L634.0 519.00" fill="none" stroke="rgba(0,0,0,0.07)" stroke-width="3" transform="translate(1,1)" stroke-linejoin="round"/><path d="M70.4 519.00 L634.0 519.00" fill="none" stroke="#3c9ad6" stroke-width="2.3" stroke-linejoin="round"/><path d="M70.4 519.00 L113.6 519.00 L117.6 434.50 L121.9 434.50 L126.3 519.00 L176.7 519.00 L180.7 434.50 L184.7 519.00 L185.0 519.00 L189.0 434.50 L193.0 519.00 L200.7 519.00 L204.7 434.50 L208.7 519.00 L259.9 519.00 L263.9 434.50 L268.2 434.50 L272.2 519.00 L303.3 519.00 L307.3 350.00 L311.3 519.00 L327.0 519.00 L331.0 434.50 L335.0 519.00 L358.7 519.00 L362.7 434.50 L366.7 519.00 L390.5 519.00 L394.5 434.50 L398.5 519.00 L402.5 434.50 L406.5 519.00 L410.0 434.50 L414.5 434.50 L418.5 519.00 L457.6 519.00 L461.6 434.50 L465.6 519.00 L481.3 519.00 L485.3 434.50 L489.6 434.50 L493.6 519.00 L501.3 519.00 L505.3 434.50 L509.3 519.00 L513.4 434.50 L517.4 434.50 L521.4 519.00 L556.4 519.00 L560.4 434.50 L564.4 519.00 L579.8 519.00 L583.8 434.50 L587.8 519.00 L599.9 519.00 L603.9 434.50 L607.9 519.00 L615.6 519.00 L619.6 434.50 L628.0 434.50 L632.0 519.00 L634.0 519.00" fill="none" stroke="rgba(0,0,0,0.07)" stroke-width="3" transform="translate(1,1)" stroke-linejoin="round"/><path d="M70.4 519.00 L113.6 519.00 L117.6 434.50 L121.9 434.50 L126.3 519.00 L176.7 519.00 L180.7 434.50 L184.7 519.00 L185.0 519.00 L189.0 434.50 L193.0 519.00 L200.7 519.00 L204.7 434.50 L208.7 519.00 L259.9 519.00 L263.9 434.50 L268.2 434.50 L272.2 519.00 L303.3 519.00 L307.3 350.00 L311.3 519.00 L327.0 519.00 L331.0 434.50 L335.0 519.00 L358.7 519.00 L362.7 434.50 L366.7 519.00 L390.5 519.00 L394.5 434.50 L398.5 519.00 L402.5 434.50 L406.5 519.00 L410.0 434.50 L414.5 434.50 L418.5 519.00 L457.6 519.00 L461.6 434.50 L465.6 519.00 L481.3 519.00 L485.3 434.50 L489.6 434.50 L493.6 519.00 L501.3 519.00 L505.3 434.50 L509.3 519.00 L513.4 434.50 L517.4 434.50 L521.4 519.00 L556.4 519.00 L560.4 434.50 L564.4 519.00 L579.8 519.00 L583.8 434.50 L587.8 519.00 L599.9 519.00 L603.9 434.50 L607.9 519.00 L615.6 519.00 L619.6 434.50 L628.0 434.50 L632.0 519.00 L634.0 519.00" fill="none" stroke="#6cbf6a" stroke-width="2.3" stroke-linejoin="round"/><line x1="64" x2="637" y1="519.5" y2="519.5" stroke="#7a7a7a" stroke-width="1"/><line x1="122.5" x2="122.5" y1="520" y2="525" stroke="#7a7a7a" stroke-width="1"/><text x="121.9" y="532.6" text-anchor="middle" font-size="12" letter-spacing="0.25" font-family="Liberation Sans, sans-serif" fill="#1a1a1a">12:00</text><line x1="216.5" x2="216.5" y1="520" y2="525" stroke="#7a7a7a" stroke-width="1"/><text x="216.4" y="532.6" text-anchor="middle" font-size="12" letter-spacing="0.25" font-family="Liberation Sans, sans-serif" fill="#1a1a1a">14:00</text><line x1="311.5" x2="311.5" y1="520" y2="525" stroke="#7a7a7a" stroke-width="1"/><text x="311.3" y="532.6" text-anchor="middle" font-size="12" letter-spacing="0.25" font-family="Liberation Sans, sans-serif" fill="#1a1a1a">16:00</text><line x1="406.5" x2="406.5" y1="520" y2="525" stroke="#7a7a7a" stroke-width="1"/><text x="406.5" y="532.6" text-anchor="middle" font-size="12" letter-spacing="0.25" font-family="Liberation Sans, sans-serif" fill="#1a1a1a">18:00</text><line x1="501.5" x2="501.5" y1="520" y2="525" stroke="#7a7a7a" stroke-width="1"/><text x="501.0" y="532.6" text-anchor="middle" font-size="12" letter-spacing="0.25" font-family="Liberation Sans, sans-serif" fill="#1a1a1a">20:00</text><line x1="596.5" x2="596.5" y1="520" y2="525" stroke="#7a7a7a" stroke-width="1"/><text x="595.5" y="532.6" text-anchor="middle" font-size="12" letter-spacing="0.25" font-family="Liberation Sans, sans-serif" fill="#1a1a1a">22:00</text><rect x="125.7" y="544.5" width="387.3" height="25.0" rx="2" fill="#e4e4e4" stroke="#707070" stroke-width="1"/><line x1="133" x2="149" y1="558" y2="558" stroke="#3c9ad6" stroke-width="2"/><text x="154" y="561.5" font-size="12" letter-spacing="0.05" font-family="Liberation Sans, sans-serif" fill="#1a1a1a">Current Anonymous Users</text><line x1="311" x2="327" y1="558" y2="558" stroke="#6cbf6a" stroke-width="2"/><text x="332" y="561.5" font-size="12" letter-spacing="0.05" font-family="Liberation Sans, sans-serif" fill="#1a1a1a">Current Non Anonymous Users</text></svg><svg style="position:absolute;left:639px;top:333px" width="634" height="241" viewBox="639 333 634 241"><defs><linearGradient id="g639_333d" x1="0" x2="1" y1="0" y2="0"><stop offset="0" stop-color="#f5f5f5"/><stop offset="1" stop-color="#e0e0e0"/></linearGradient><linearGradient id="g639_333l" x1="0" x2="1" y1="0" y2="0"><stop offset="0" stop-color="#f7f7f7"/><stop offset="1" stop-color="#fcfcfc"/></linearGradient></defs><rect x="692" y="475" width="581" height="44" fill="url(#g639_333l)"/><rect x="692" y="430" width="581" height="45" fill="url(#g639_333d)"/><rect x="692" y="386" width="581" height="44" fill="url(#g639_333l)"/><rect x="692" y="342" width="581" height="44" fill="url(#g639_333d)"/><rect x="692" y="338" width="581" height="4" fill="url(#g639_333l)"/><line x1="687" x2="1273" y1="342.5" y2="342.5" stroke="#cdcdcd" stroke-width="1"/><text x="684" y="347" text-anchor="end" font-size="12" letter-spacing="0.2" font-family="Liberation Sans, sans-serif" fill="#1a1a1a">40kBps</text><line x1="687" x2="1273" y1="386.5" y2="386.5" stroke="#cdcdcd" stroke-width="1"/><text x="684" y="391" text-anchor="end" font-size="12" letter-spacing="0.2" font-family="Liberation Sans, sans-serif" fill="#1a1a1a">30kBps</text><line x1="687" x2="1273" y1="430.5" y2="430.5" stroke="#cdcdcd" stroke-width="1"/><text x="684" y="435" text-anchor="end" font-size="12" letter-spacing="0.2" font-family="Liberation Sans, sans-serif" fill="#1a1a1a">20kBps</text><line x1="687" x2="1273" y1="475.5" y2="475.5" stroke="#cdcdcd" stroke-width="1"/><text x="684" y="480" text-anchor="end" font-size="12" letter-spacing="0.2" font-family="Liberation Sans, sans-serif" fill="#1a1a1a">10kBps</text><line x1="687" x2="691" y1="519.5" y2="519.5" stroke="#cdcdcd" stroke-width="1"/><text x="684" y="524" text-anchor="end" font-size="12" letter-spacing="0.2" font-family="Liberation Sans, sans-serif" fill="#1a1a1a">0kBps</text><line x1="691.5" x2="691.5" y1="338" y2="520" stroke="#c4c4c4" stroke-width="1"/><path d="M698.0 513.34 L718.0 513.34 L721.5 519.00 L725.5 514.04 L729.3 519.00 L737.0 519.00 L741.7 513.34 L745.5 421.65 L749.6 395.10 L754.0 513.34 L757.9 513.34 L762.0 510.50 L766.4 514.04 L771.0 519.00 L774.0 519.00 L777.7 513.34 L781.7 513.34 L786.0 508.38 L790.0 513.34 L793.9 519.00 L798.0 513.34 L801.7 519.00 L805.8 519.00 L809.8 380.41 L814.0 513.34 L818.0 519.00 L833.9 519.00 L838.0 513.34 L842.0 513.34 L845.8 519.00 L850.0 513.34 L865.4 513.34 L869.9 519.00 L873.9 513.34 L878.0 513.34 L882.2 519.00 L886.3 513.34 L890.5 513.34 L894.6 519.00 L898.4 413.13 L902.5 519.00 L906.3 513.34 L914.8 513.34 L918.9 519.00 L922.7 513.34 L934.0 514.04 L938.4 485.81 L942.5 513.25 L946.3 519.00 L950.8 513.34 L954.7 513.34 L958.7 519.00 L967.0 519.00 L971.0 513.34 L975.0 513.34 L977.7 519.00 L981.7 513.34 L995.2 513.34 L998.6 519.00 L1002.0 513.34 L1006.5 513.34 L1010.5 519.00 L1022.2 519.00 L1026.7 372.71 L1031.2 519.00 L1034.6 519.00 L1038.6 513.76 L1042.4 519.00 L1045.8 519.00 L1049.9 513.34 L1054.8 513.34 L1058.2 519.00 L1062.2 513.76 L1066.0 519.00 L1073.9 519.00 L1078.4 513.76 L1082.9 519.00 L1086.3 519.00 L1090.8 513.76 L1095.3 519.00 L1098.7 519.00 L1103.1 513.76 L1111.0 513.76 L1114.8 519.00 L1118.9 370.78 L1123.4 488.02 L1127.9 519.00 L1130.8 513.76 L1134.2 519.00 L1139.1 380.41 L1143.2 519.00 L1167.2 519.00 L1171.3 514.04 L1175.1 519.00 L1190.8 519.00 L1194.9 388.11 L1199.4 519.00 L1215.1 519.00 L1218.9 372.71 L1223.4 519.00 L1231.3 519.00 L1235.8 514.04 L1239.2 372.71 L1243.7 519.00 L1247.0 514.75 L1251.0 501.30 L1254.9 485.81 L1258.7 395.10 L1263.2 377.40 L1267.3 519.00" fill="none" stroke="rgba(0,0,0,0.07)" stroke-width="3" transform="translate(1,1)" stroke-linejoin="round"/><path d="M698.0 513.34 L718.0 513.34 L721.5 519.00 L725.5 514.04 L729.3 519.00 L737.0 519.00 L741.7 513.34 L745.5 421.65 L749.6 395.10 L754.0 513.34 L757.9 513.34 L762.0 510.50 L766.4 514.04 L771.0 519.00 L774.0 519.00 L777.7 513.34 L781.7 513.34 L786.0 508.38 L790.0 513.34 L793.9 519.00 L798.0 513.34 L801.7 519.00 L805.8 519.00 L809.8 380.41 L814.0 513.34 L818.0 519.00 L833.9 519.00 L838.0 513.34 L842.0 513.34 L845.8 519.00 L850.0 513.34 L865.4 513.34 L869.9 519.00 L873.9 513.34 L878.0 513.34 L882.2 519.00 L886.3 513.34 L890.5 513.34 L894.6 519.00 L898.4 413.13 L902.5 519.00 L906.3 513.34 L914.8 513.34 L918.9 519.00 L922.7 513.34 L934.0 514.04 L938.4 485.81 L942.5 513.25 L946.3 519.00 L950.8 513.34 L954.7 513.34 L958.7 519.00 L967.0 519.00 L971.0 513.34 L975.0 513.34 L977.7 519.00 L981.7 513.34 L995.2 513.34 L998.6 519.00 L1002.0 513.34 L1006.5 513.34 L1010.5 519.00 L1022.2 519.00 L1026.7 372.71 L1031.2 519.00 L1034.6 519.00 L1038.6 513.76 L1042.4 519.00 L1045.8 519.00 L1049.9 513.34 L1054.8 513.34 L1058.2 519.00 L1062.2 513.76 L1066.0 519.00 L1073.9 519.00 L1078.4 513.76 L1082.9 519.00 L1086.3 519.00 L1090.8 513.76 L1095.3 519.00 L1098.7 519.00 L1103.1 513.76 L1111.0 513.76 L1114.8 519.00 L1118.9 370.78 L1123.4 488.02 L1127.9 519.00 L1130.8 513.76 L1134.2 519.00 L1139.1 380.41 L1143.2 519.00 L1167.2 519.00 L1171.3 514.04 L1175.1 519.00 L1190.8 519.00 L1194.9 388.11 L1199.4 519.00 L1215.1 519.00 L1218.9 372.71 L1223.4 519.00 L1231.3 519.00 L1235.8 514.04 L1239.2 372.71 L1243.7 519.00 L1247.0 514.75 L1251.0 501.30 L1254.9 485.81 L1258.7 395.10 L1263.2 377.40 L1267.3 519.00" fill="none" stroke="#3c9ad6" stroke-width="2.3" stroke-linejoin="round"/><path d="M698.0 501.30 L718.0 501.30 L721.5 519.00 L725.5 503.51 L729.3 519.00 L737.0 519.00 L741.7 501.30 L745.5 395.10 L749.6 381.82 L754.0 501.30 L757.9 501.30 L762.0 492.45 L766.4 503.51 L771.0 519.00 L774.0 519.00 L777.7 501.30 L781.7 501.30 L786.0 485.81 L790.0 501.30 L793.9 519.00 L798.0 501.30 L801.7 519.00 L805.8 519.00 L809.8 359.70 L814.0 501.30 L818.0 519.00 L833.9 519.00 L838.0 501.30 L842.0 501.30 L845.8 519.00 L850.0 501.30 L865.4 501.30 L869.9 519.00 L873.9 501.30 L878.0 501.30 L882.2 519.00 L886.3 501.30 L890.5 501.30 L894.6 519.00 L898.4 397.31 L902.5 519.00 L906.3 501.30 L914.8 501.30 L918.9 519.00 L922.7 501.30 L934.0 503.51 L938.4 428.29 L942.5 501.30 L946.3 519.00 L950.8 501.30 L954.7 501.30 L958.7 519.00 L967.0 519.00 L971.0 501.30 L975.0 501.30 L977.7 519.00 L981.7 501.30 L995.2 501.30 L998.6 519.00 L1002.0 501.30 L1006.5 501.30 L1010.5 519.00 L1022.2 519.00 L1026.7 350.85 L1031.2 519.00 L1034.6 519.00 L1038.6 502.63 L1042.4 519.00 L1045.8 519.00 L1049.9 501.30 L1054.8 501.30 L1058.2 519.00 L1062.2 502.63 L1066.0 519.00 L1073.9 519.00 L1078.4 502.63 L1082.9 519.00 L1086.3 519.00 L1090.8 502.63 L1095.3 519.00 L1098.7 519.00 L1103.1 502.63 L1111.0 502.63 L1114.8 519.00 L1118.9 348.64 L1127.9 519.00 L1130.8 502.63 L1134.2 519.00 L1139.1 359.70 L1143.2 519.00 L1167.2 519.00 L1171.3 503.51 L1175.1 519.00 L1190.8 519.00 L1194.9 368.55 L1199.4 519.00 L1215.1 519.00 L1218.9 350.85 L1223.4 519.00 L1231.3 519.00 L1235.8 503.51 L1239.2 350.85 L1243.7 519.00 L1247.0 505.73 L1251.0 457.05 L1254.9 439.35 L1258.7 372.98 L1263.2 355.27 L1267.3 519.00" fill="none" stroke="rgba(0,0,0,0.07)" stroke-width="3" transform="translate(1,1)" stroke-linejoin="round"/><path d="M698.0 501.30 L718.0 501.30 L721.5 519.00 L725.5 503.51 L729.3 519.00 L737.0 519.00 L741.7 501.30 L745.5 395.10 L749.6 381.82 L754.0 501.30 L757.9 501.30 L762.0 492.45 L766.4 503.51 L771.0 519.00 L774.0 519.00 L777.7 501.30 L781.7 501.30 L786.0 485.81 L790.0 501.30 L793.9 519.00 L798.0 501.30 L801.7 519.00 L805.8 519.00 L809.8 359.70 L814.0 501.30 L818.0 519.00 L833.9 519.00 L838.0 501.30 L842.0 501.30 L845.8 519.00 L850.0 501.30 L865.4 501.30 L869.9 519.00 L873.9 501.30 L878.0 501.30 L882.2 519.00 L886.3 501.30 L890.5 501.30 L894.6 519.00 L898.4 397.31 L902.5 519.00 L906.3 501.30 L914.8 501.30 L918.9 519.00 L922.7 501.30 L934.0 503.51 L938.4 428.29 L942.5 501.30 L946.3 519.00 L950.8 501.30 L954.7 501.30 L958.7 519.00 L967.0 519.00 L971.0 501.30 L975.0 501.30 L977.7 519.00 L981.7 501.30 L995.2 501.30 L998.6 519.00 L1002.0 501.30 L1006.5 501.30 L1010.5 519.00 L1022.2 519.00 L1026.7 350.85 L1031.2 519.00 L1034.6 519.00 L1038.6 502.63 L1042.4 519.00 L1045.8 519.00 L1049.9 501.30 L1054.8 501.30 L1058.2 519.00 L1062.2 502.63 L1066.0 519.00 L1073.9 519.00 L1078.4 502.63 L1082.9 519.00 L1086.3 519.00 L1090.8 502.63 L1095.3 519.00 L1098.7 519.00 L1103.1 502.63 L1111.0 502.63 L1114.8 519.00 L1118.9 348.64 L1127.9 519.00 L1130.8 502.63 L1134.2 519.00 L1139.1 359.70 L1143.2 519.00 L1167.2 519.00 L1171.3 503.51 L1175.1 519.00 L1190.8 519.00 L1194.9 368.55 L1199.4 519.00 L1215.1 519.00 L1218.9 350.85 L1223.4 519.00 L1231.3 519.00 L1235.8 503.51 L1239.2 350.85 L1243.7 519.00 L1247.0 505.73 L1251.0 457.05 L1254.9 439.35 L1258.7 372.98 L1263.2 355.27 L1267.3 519.00" fill="none" stroke="#6cbf6a" stroke-width="2.3" stroke-linejoin="round"/><line x1="691" x2="1273" y1="519.5" y2="519.5" stroke="#7a7a7a" stroke-width="1"/><line x1="750.5" x2="750.5" y1="520" y2="525" stroke="#7a7a7a" stroke-width="1"/><text x="749.6" y="532.6" text-anchor="middle" font-size="12" letter-spacing="0.25" font-family="Liberation Sans, sans-serif" fill="#1a1a1a">12:00</text><line x1="846.5" x2="846.5" y1="520" y2="525" stroke="#7a7a7a" stroke-width="1"/><text x="846.4" y="532.6" text-anchor="middle" font-size="12" letter-spacing="0.25" font-family="Liberation Sans, sans-serif" fill="#1a1a1a">14:00</text><line x1="942.5" x2="942.5" y1="520" y2="525" stroke="#7a7a7a" stroke-width="1"/><text x="942.0" y="532.6" text-anchor="middle" font-size="12" letter-spacing="0.25" font-family="Liberation Sans, sans-serif" fill="#1a1a1a">16:00</text><line x1="1038.5" x2="1038.5" y1="520" y2="525" stroke="#7a7a7a" stroke-width="1"/><text x="1038.5" y="532.6" text-anchor="middle" font-size="12" letter-spacing="0.25" font-family="Liberation Sans, sans-serif" fill="#1a1a1a">18:00</text><line x1="1134.5" x2="1134.5" y1="520" y2="525" stroke="#7a7a7a" stroke-width="1"/><text x="1134.3" y="532.6" text-anchor="middle" font-size="12" letter-spacing="0.25" font-family="Liberation Sans, sans-serif" fill="#1a1a1a">20:00</text><line x1="1230.5" x2="1230.5" y1="520" y2="525" stroke="#7a7a7a" stroke-width="1"/><text x="1230.5" y="532.6" text-anchor="middle" font-size="12" letter-spacing="0.25" font-family="Liberation Sans, sans-serif" fill="#1a1a1a">22:00</text><rect x="783.3" y="544.8" width="344.29999999999995" height="24.700000000000045" rx="2" fill="#e4e4e4" stroke="#707070" stroke-width="1"/><line x1="791" x2="807" y1="558" y2="558" stroke="#3c9ad6" stroke-width="2"/><text x="812" y="561.5" font-size="12" letter-spacing="0.05" font-family="Liberation Sans, sans-serif" fill="#1a1a1a">Bytes Sent per Second</text><line x1="946" x2="962" y1="558" y2="558" stroke="#6cbf6a" stroke-width="2"/><text x="967" y="561.5" font-size="12" letter-spacing="0.05" font-family="Liberation Sans, sans-serif" fill="#1a1a1a">Bytes Received per Second</text></svg><svg style="position:absolute;left:1275px;top:333px" width="634" height="241" viewBox="1275 333 634 241"><defs><linearGradient id="g1275_333d" x1="0" x2="1" y1="0" y2="0"><stop offset="0" stop-color="#f5f5f5"/><stop offset="1" stop-color="#e0e0e0"/></linearGradient><linearGradient id="g1275_333l" x1="0" x2="1" y1="0" y2="0"><stop offset="0" stop-color="#f7f7f7"/><stop offset="1" stop-color="#fcfcfc"/></linearGradient></defs><rect x="1363" y="463" width="546" height="56" fill="url(#g1275_333l)"/><rect x="1363" y="406" width="546" height="57" fill="url(#g1275_333d)"/><rect x="1363" y="350" width="546" height="56" fill="url(#g1275_333l)"/><rect x="1363" y="338" width="546" height="12" fill="url(#g1275_333d)"/><line x1="1358" x2="1909" y1="350.5" y2="350.5" stroke="#cdcdcd" stroke-width="1"/><text x="1355" y="355" text-anchor="end" font-size="12" letter-spacing="0.2" font-family="Liberation Sans, sans-serif" fill="#1a1a1a">3Connections</text><line x1="1358" x2="1909" y1="406.5" y2="406.5" stroke="#cdcdcd" stroke-width="1"/><text x="1355" y="411" text-anchor="end" font-size="12" letter-spacing="0.2" font-family="Liberation Sans, sans-serif" fill="#1a1a1a">2Connections</text><line x1="1358" x2="1909" y1="463.5" y2="463.5" stroke="#cdcdcd" stroke-width="1"/><text x="1355" y="468" text-anchor="end" font-size="12" letter-spacing="0.2" font-family="Liberation Sans, sans-serif" fill="#1a1a1a">1Connections</text><line x1="1358" x2="1362" y1="519.5" y2="519.5" stroke="#cdcdcd" stroke-width="1"/><text x="1355" y="524" text-anchor="end" font-size="12" letter-spacing="0.2" font-family="Liberation Sans, sans-serif" fill="#1a1a1a">0Connections</text><line x1="1362.5" x2="1362.5" y1="338" y2="520" stroke="#c4c4c4" stroke-width="1"/><path d="M1368.8 519.00 L1409.8 519.00 L1413.2 406.33 L1417.2 350.00 L1421.6 519.00 L1469.6 519.00 L1473.7 406.33 L1477.7 519.00 L1481.0 406.33 L1485.4 519.00 L1492.2 519.00 L1496.5 406.33 L1500.6 519.00 L1549.3 519.00 L1553.3 350.00 L1557.7 406.33 L1561.8 519.00 L1590.3 519.00 L1594.7 406.33 L1598.7 519.00 L1613.2 519.00 L1617.2 350.00 L1621.6 519.00 L1673.7 519.00 L1677.7 350.00 L1681.5 519.00 L1684.8 462.67 L1688.8 519.00 L1692.8 350.00 L1696.2 406.33 L1700.6 519.00 L1737.6 519.00 L1741.6 462.67 L1746.0 519.00 L1759.4 519.00 L1764.4 350.00 L1768.5 406.33 L1772.2 519.00 L1778.9 519.00 L1783.0 406.33 L1787.0 519.00 L1790.7 350.00 L1794.7 519.00 L1831.7 519.00 L1836.0 350.00 L1840.0 519.00 L1854.5 519.00 L1858.6 350.00 L1862.6 519.00 L1873.7 519.00 L1877.0 350.00 L1881.0 519.00 L1884.4 519.00 L1888.8 462.67 L1892.2 462.67 L1896.2 350.00 L1900.6 350.00 L1904.6 519.00" fill="none" stroke="rgba(0,0,0,0.07)" stroke-width="3" transform="translate(1,1)" stroke-linejoin="round"/><path d="M1368.8 519.00 L1409.8 519.00 L1413.2 406.33 L1417.2 350.00 L1421.6 519.00 L1469.6 519.00 L1473.7 406.33 L1477.7 519.00 L1481.0 406.33 L1485.4 519.00 L1492.2 519.00 L1496.5 406.33 L1500.6 519.00 L1549.3 519.00 L1553.3 350.00 L1557.7 406.33 L1561.8 519.00 L1590.3 519.00 L1594.7 406.33 L1598.7 519.00 L1613.2 519.00 L1617.2 350.00 L1621.6 519.00 L1673.7 519.00 L1677.7 350.00 L1681.5 519.00 L1684.8 462.67 L1688.8 519.00 L1692.8 350.00 L1696.2 406.33 L1700.6 519.00 L1737.6 519.00 L1741.6 462.67 L1746.0 519.00 L1759.4 519.00 L1764.4 350.00 L1768.5 406.33 L1772.2 519.00 L1778.9 519.00 L1783.0 406.33 L1787.0 519.00 L1790.7 350.00 L1794.7 519.00 L1831.7 519.00 L1836.0 350.00 L1840.0 519.00 L1854.5 519.00 L1858.6 350.00 L1862.6 519.00 L1873.7 519.00 L1877.0 350.00 L1881.0 519.00 L1884.4 519.00 L1888.8 462.67 L1892.2 462.67 L1896.2 350.00 L1900.6 350.00 L1904.6 519.00" fill="none" stroke="#3c9ad6" stroke-width="2.3" stroke-linejoin="round"/><line x1="1362" x2="1909" y1="519.5" y2="519.5" stroke="#7a7a7a" stroke-width="1"/><line x1="1417.5" x2="1417.5" y1="520" y2="525" stroke="#7a7a7a" stroke-width="1"/><text x="1417.2" y="532.6" text-anchor="middle" font-size="12" letter-spacing="0.25" font-family="Liberation Sans, sans-serif" fill="#1a1a1a">12:00</text><line x1="1508.5" x2="1508.5" y1="520" y2="525" stroke="#7a7a7a" stroke-width="1"/><text x="1508.0" y="532.6" text-anchor="middle" font-size="12" letter-spacing="0.25" font-family="Liberation Sans, sans-serif" fill="#1a1a1a">14:00</text><line x1="1599.5" x2="1599.5" y1="520" y2="525" stroke="#7a7a7a" stroke-width="1"/><text x="1598.7" y="532.6" text-anchor="middle" font-size="12" letter-spacing="0.25" font-family="Liberation Sans, sans-serif" fill="#1a1a1a">16:00</text><line x1="1689.5" x2="1689.5" y1="520" y2="525" stroke="#7a7a7a" stroke-width="1"/><text x="1688.8" y="532.6" text-anchor="middle" font-size="12" letter-spacing="0.25" font-family="Liberation Sans, sans-serif" fill="#1a1a1a">18:00</text><line x1="1780.5" x2="1780.5" y1="520" y2="525" stroke="#7a7a7a" stroke-width="1"/><text x="1779.6" y="532.6" text-anchor="middle" font-size="12" letter-spacing="0.25" font-family="Liberation Sans, sans-serif" fill="#1a1a1a">20:00</text><line x1="1870.5" x2="1870.5" y1="520" y2="525" stroke="#7a7a7a" stroke-width="1"/><text x="1869.6" y="532.6" text-anchor="middle" font-size="12" letter-spacing="0.25" font-family="Liberation Sans, sans-serif" fill="#1a1a1a">22:00</text><rect x="1503.3" y="544.3" width="176.10000000000014" height="25.200000000000045" rx="2" fill="#e4e4e4" stroke="#707070" stroke-width="1"/><line x1="1511" x2="1527" y1="558" y2="558" stroke="#3c9ad6" stroke-width="2"/><text x="1532" y="561.5" font-size="12" letter-spacing="0.05" font-family="Liberation Sans, sans-serif" fill="#1a1a1a">Active HTTP Connections</text></svg><svg style="position:absolute;left:3px;top:599px" width="634" height="237" viewBox="3 599 634 237"><defs><linearGradient id="g3_599d" x1="0" x2="1" y1="0" y2="0"><stop offset="0" stop-color="#f5f5f5"/><stop offset="1" stop-color="#e0e0e0"/></linearGradient><linearGradient id="g3_599l" x1="0" x2="1" y1="0" y2="0"><stop offset="0" stop-color="#f7f7f7"/><stop offset="1" stop-color="#fcfcfc"/></linearGradient></defs><rect x="119" y="740" width="518" height="41" fill="url(#g3_599l)"/><rect x="119" y="698" width="518" height="42" fill="url(#g3_599d)"/><rect x="119" y="657" width="518" height="41" fill="url(#g3_599l)"/><rect x="119" y="616" width="518" height="41" fill="url(#g3_599d)"/><rect x="119" y="604" width="518" height="12" fill="url(#g3_599l)"/><line x1="114" x2="637" y1="616.5" y2="616.5" stroke="#cdcdcd" stroke-width="1"/><text x="111" y="621" text-anchor="end" font-size="12" letter-spacing="0.2" font-family="Liberation Sans, sans-serif" fill="#1a1a1a">1Pages/Second</text><line x1="114" x2="637" y1="657.5" y2="657.5" stroke="#cdcdcd" stroke-width="1"/><text x="111" y="662" text-anchor="end" font-size="12" letter-spacing="0.2" font-family="Liberation Sans, sans-serif" fill="#1a1a1a">0.75Pages/Second</text><line x1="114" x2="637" y1="698.5" y2="698.5" stroke="#cdcdcd" stroke-width="1"/><text x="111" y="703" text-anchor="end" font-size="12" letter-spacing="0.2" font-family="Liberation Sans, sans-serif" fill="#1a1a1a">0.5Pages/Second</text><line x1="114" x2="637" y1="740.5" y2="740.5" stroke="#cdcdcd" stroke-width="1"/><text x="111" y="745" text-anchor="end" font-size="12" letter-spacing="0.2" font-family="Liberation Sans, sans-serif" fill="#1a1a1a">0.25Pages/Second</text><line x1="114" x2="118" y1="781.5" y2="781.5" stroke="#cdcdcd" stroke-width="1"/><text x="111" y="786" text-anchor="end" font-size="12" letter-spacing="0.2" font-family="Liberation Sans, sans-serif" fill="#1a1a1a">0Pages/Second</text><line x1="118.5" x2="118.5" y1="604" y2="782" stroke="#c4c4c4" stroke-width="1"/><path d="M123.5 781.00 L127.4 619.30 L128.5 620.95 L131.9 781.00 L134.8 781.00 L138.2 616.00 L142.0 781.00 L156.1 781.00 L160.0 617.65 L163.3 781.00 L184.7 781.00 L188.0 617.65 L191.4 781.00 L206.0 781.00 L209.9 617.65 L213.2 781.00 L216.6 781.00 L220.6 617.65 L224.0 781.00 L231.4 781.00 L234.8 617.65 L238.2 652.30 L242.0 649.00 L246.5 781.00 L249.4 781.00 L252.8 624.25 L256.2 781.00 L267.4 781.00 L270.8 616.00 L274.2 781.00 L281.3 781.00 L285.2 625.90 L288.5 781.00 L295.5 781.00 L298.9 622.60 L302.7 617.65 L306.0 617.65 L310.1 629.20 L313.5 781.00 L324.0 781.00 L328.0 617.65 L331.9 781.00 L349.4 781.00 L352.8 616.00 L356.6 639.10 L360.0 781.00 L363.8 781.00 L367.2 622.60 L370.8 781.00 L374.0 781.00 L377.7 627.55 L381.7 781.00 L381.8 781.00 L385.0 617.65 L389.1 781.00 L403.0 781.00 L406.4 627.55 L409.3 639.10 L414.3 781.00 L417.2 781.00 L421.0 625.90 L424.4 781.00 L428.0 617.65 L431.8 781.00 L442.4 781.00 L446.0 622.60 L449.8 781.00 L459.9 781.00 L464.0 620.95 L467.8 781.00 L524.6 781.00 L528.0 616.00 L531.8 781.00 L567.3 781.00 L570.7 617.65 L575.0 781.00 L577.9 781.00 L581.7 617.65 L585.8 781.00 L588.5 781.00 L592.5 624.25 L596.6 781.00 L633.0 781.00" fill="none" stroke="rgba(0,0,0,0.07)" stroke-width="3" transform="translate(1,1)" stroke-linejoin="round"/><path d="M123.5 781.00 L127.4 619.30 L128.5 620.95 L131.9 781.00 L134.8 781.00 L138.2 616.00 L142.0 781.00 L156.1 781.00 L160.0 617.65 L163.3 781.00 L184.7 781.00 L188.0 617.65 L191.4 781.00 L206.0 781.00 L209.9 617.65 L213.2 781.00 L216.6 781.00 L220.6 617.65 L224.0 781.00 L231.4 781.00 L234.8 617.65 L238.2 652.30 L242.0 649.00 L246.5 781.00 L249.4 781.00 L252.8 624.25 L256.2 781.00 L267.4 781.00 L270.8 616.00 L274.2 781.00 L281.3 781.00 L285.2 625.90 L288.5 781.00 L295.5 781.00 L298.9 622.60 L302.7 617.65 L306.0 617.65 L310.1 629.20 L313.5 781.00 L324.0 781.00 L328.0 617.65 L331.9 781.00 L349.4 781.00 L352.8 616.00 L356.6 639.10 L360.0 781.00 L363.8 781.00 L367.2 622.60 L370.8 781.00 L374.0 781.00 L377.7 627.55 L381.7 781.00 L381.8 781.00 L385.0 617.65 L389.1 781.00 L403.0 781.00 L406.4 627.55 L409.3 639.10 L414.3 781.00 L417.2 781.00 L421.0 625.90 L424.4 781.00 L428.0 617.65 L431.8 781.00 L442.4 781.00 L446.0 622.60 L449.8 781.00 L459.9 781.00 L464.0 620.95 L467.8 781.00 L524.6 781.00 L528.0 616.00 L531.8 781.00 L567.3 781.00 L570.7 617.65 L575.0 781.00 L577.9 781.00 L581.7 617.65 L585.8 781.00 L588.5 781.00 L592.5 624.25 L596.6 781.00 L633.0 781.00" fill="none" stroke="#3c9ad6" stroke-width="2.3" stroke-linejoin="round"/><line x1="118" x2="637" y1="781.5" y2="781.5" stroke="#7a7a7a" stroke-width="1"/><line x1="170.5" x2="170.5" y1="782" y2="787" stroke="#7a7a7a" stroke-width="1"/><text x="170.3" y="794.6" text-anchor="middle" font-size="12" letter-spacing="0.25" font-family="Liberation Sans, sans-serif" fill="#1a1a1a">12:00</text><line x1="256.5" x2="256.5" y1="782" y2="787" stroke="#7a7a7a" stroke-width="1"/><text x="256.2" y="794.6" text-anchor="middle" font-size="12" letter-spacing="0.25" font-family="Liberation Sans, sans-serif" fill="#1a1a1a">14:00</text><line x1="342.5" x2="342.5" y1="782" y2="787" stroke="#7a7a7a" stroke-width="1"/><text x="342.3" y="794.6" text-anchor="middle" font-size="12" letter-spacing="0.25" font-family="Liberation Sans, sans-serif" fill="#1a1a1a">16:00</text><line x1="428.5" x2="428.5" y1="782" y2="787" stroke="#7a7a7a" stroke-width="1"/><text x="428.5" y="794.6" text-anchor="middle" font-size="12" letter-spacing="0.25" font-family="Liberation Sans, sans-serif" fill="#1a1a1a">18:00</text><line x1="514.5" x2="514.5" y1="782" y2="787" stroke="#7a7a7a" stroke-width="1"/><text x="513.7" y="794.6" text-anchor="middle" font-size="12" letter-spacing="0.25" font-family="Liberation Sans, sans-serif" fill="#1a1a1a">20:00</text><line x1="599.5" x2="599.5" y1="782" y2="787" stroke="#7a7a7a" stroke-width="1"/><text x="598.9" y="794.6" text-anchor="middle" font-size="12" letter-spacing="0.25" font-family="Liberation Sans, sans-serif" fill="#1a1a1a">22:00</text><rect x="249.2" y="806.1" width="139.90000000000003" height="25.100000000000023" rx="2" fill="#e4e4e4" stroke="#707070" stroke-width="1"/><line x1="257" x2="273" y1="820" y2="820" stroke="#3c9ad6" stroke-width="2"/><text x="278" y="823.5" font-size="12" letter-spacing="0.05" font-family="Liberation Sans, sans-serif" fill="#1a1a1a">Pages per Second</text></svg><svg style="position:absolute;left:639px;top:599px" width="634" height="237" viewBox="639 599 634 237"><defs><linearGradient id="g639_599d" x1="0" x2="1" y1="0" y2="0"><stop offset="0" stop-color="#f5f5f5"/><stop offset="1" stop-color="#e0e0e0"/></linearGradient><linearGradient id="g639_599l" x1="0" x2="1" y1="0" y2="0"><stop offset="0" stop-color="#f7f7f7"/><stop offset="1" stop-color="#fcfcfc"/></linearGradient></defs><rect x="682" y="737" width="591" height="44" fill="url(#g639_599l)"/><rect x="682" y="693" width="591" height="44" fill="url(#g639_599d)"/><rect x="682" y="648" width="591" height="45" fill="url(#g639_599l)"/><rect x="682" y="604" width="591" height="44" fill="url(#g639_599d)"/><line x1="677" x2="1273" y1="604.5" y2="604.5" stroke="#cdcdcd" stroke-width="1"/><text x="674" y="609" text-anchor="end" font-size="12" letter-spacing="0.2" font-family="Liberation Sans, sans-serif" fill="#1a1a1a">100%</text><line x1="677" x2="1273" y1="648.5" y2="648.5" stroke="#cdcdcd" stroke-width="1"/><text x="674" y="653" text-anchor="end" font-size="12" letter-spacing="0.2" font-family="Liberation Sans, sans-serif" fill="#1a1a1a">75%</text><line x1="677" x2="1273" y1="693.5" y2="693.5" stroke="#cdcdcd" stroke-width="1"/><text x="674" y="698" text-anchor="end" font-size="12" letter-spacing="0.2" font-family="Liberation Sans, sans-serif" fill="#1a1a1a">50%</text><line x1="677" x2="1273" y1="737.5" y2="737.5" stroke="#cdcdcd" stroke-width="1"/><text x="674" y="742" text-anchor="end" font-size="12" letter-spacing="0.2" font-family="Liberation Sans, sans-serif" fill="#1a1a1a">25%</text><line x1="677" x2="681" y1="781.5" y2="781.5" stroke="#cdcdcd" stroke-width="1"/><text x="674" y="786" text-anchor="end" font-size="12" letter-spacing="0.2" font-family="Liberation Sans, sans-serif" fill="#1a1a1a">0%</text><line x1="681.5" x2="681.5" y1="604" y2="782" stroke="#c4c4c4" stroke-width="1"/><path d="M688.0 781.00 L1267.0 781.00" fill="none" stroke="rgba(0,0,0,0.07)" stroke-width="3" transform="translate(1,1)" stroke-linejoin="round"/><path d="M688.0 781.00 L1267.0 781.00" fill="none" stroke="#3c9ad6" stroke-width="2.3" stroke-linejoin="round"/><line x1="681" x2="1273" y1="781.5" y2="781.5" stroke="#7a7a7a" stroke-width="1"/><line x1="741.5" x2="741.5" y1="782" y2="787" stroke="#7a7a7a" stroke-width="1"/><text x="741.0" y="794.6" text-anchor="middle" font-size="12" letter-spacing="0.25" font-family="Liberation Sans, sans-serif" fill="#1a1a1a">12:00</text><line x1="838.5" x2="838.5" y1="782" y2="787" stroke="#7a7a7a" stroke-width="1"/><text x="838.5" y="794.6" text-anchor="middle" font-size="12" letter-spacing="0.25" font-family="Liberation Sans, sans-serif" fill="#1a1a1a">14:00</text><line x1="936.5" x2="936.5" y1="782" y2="787" stroke="#7a7a7a" stroke-width="1"/><text x="936.0" y="794.6" text-anchor="middle" font-size="12" letter-spacing="0.25" font-family="Liberation Sans, sans-serif" fill="#1a1a1a">16:00</text><line x1="1034.5" x2="1034.5" y1="782" y2="787" stroke="#7a7a7a" stroke-width="1"/><text x="1033.8" y="794.6" text-anchor="middle" font-size="12" letter-spacing="0.25" font-family="Liberation Sans, sans-serif" fill="#1a1a1a">18:00</text><line x1="1132.5" x2="1132.5" y1="782" y2="787" stroke="#7a7a7a" stroke-width="1"/><text x="1132.0" y="794.6" text-anchor="middle" font-size="12" letter-spacing="0.25" font-family="Liberation Sans, sans-serif" fill="#1a1a1a">20:00</text><line x1="1230.5" x2="1230.5" y1="782" y2="787" stroke="#7a7a7a" stroke-width="1"/><text x="1229.7" y="794.6" text-anchor="middle" font-size="12" letter-spacing="0.25" font-family="Liberation Sans, sans-serif" fill="#1a1a1a">22:00</text><rect x="871.5" y="806" width="168.0" height="25.200000000000045" rx="2" fill="#e4e4e4" stroke="#707070" stroke-width="1"/><line x1="879" x2="895" y1="820" y2="820" stroke="#3c9ad6" stroke-width="2"/><text x="900" y="823.5" font-size="12" letter-spacing="0.05" font-family="Liberation Sans, sans-serif" fill="#1a1a1a">URI Cache Hits Percent</text></svg><svg style="position:absolute;left:1275px;top:599px" width="634" height="237" viewBox="1275 599 634 237"><defs><linearGradient id="g1275_599d" x1="0" x2="1" y1="0" y2="0"><stop offset="0" stop-color="#f5f5f5"/><stop offset="1" stop-color="#e0e0e0"/></linearGradient><linearGradient id="g1275_599l" x1="0" x2="1" y1="0" y2="0"><stop offset="0" stop-color="#f7f7f7"/><stop offset="1" stop-color="#fcfcfc"/></linearGradient></defs><rect x="1389" y="730" width="520" height="51" fill="url(#g1275_599l)"/><rect x="1389" y="680" width="520" height="50" fill="url(#g1275_599d)"/><rect x="1389" y="629" width="520" height="51" fill="url(#g1275_599l)"/><rect x="1389" y="604" width="520" height="25" fill="url(#g1275_599d)"/><line x1="1384" x2="1909" y1="629.5" y2="629.5" stroke="#cdcdcd" stroke-width="1"/><text x="1381" y="634" text-anchor="end" font-size="12" letter-spacing="0.2" font-family="Liberation Sans, sans-serif" fill="#1a1a1a">0.06Errors/Second</text><line x1="1384" x2="1909" y1="680.5" y2="680.5" stroke="#cdcdcd" stroke-width="1"/><text x="1381" y="685" text-anchor="end" font-size="12" letter-spacing="0.2" font-family="Liberation Sans, sans-serif" fill="#1a1a1a">0.04Errors/Second</text><line x1="1384" x2="1909" y1="730.5" y2="730.5" stroke="#cdcdcd" stroke-width="1"/><text x="1381" y="735" text-anchor="end" font-size="12" letter-spacing="0.2" font-family="Liberation Sans, sans-serif" fill="#1a1a1a">0.02Errors/Second</text><line x1="1384" x2="1388" y1="781.5" y2="781.5" stroke="#cdcdcd" stroke-width="1"/><text x="1381" y="786" text-anchor="end" font-size="12" letter-spacing="0.2" font-family="Liberation Sans, sans-serif" fill="#1a1a1a">0Errors/Second</text><line x1="1388.5" x2="1388.5" y1="604" y2="782" stroke="#c4c4c4" stroke-width="1"/><path d="M1395.0 781.00 L1904.0 781.00" fill="none" stroke="rgba(0,0,0,0.07)" stroke-width="3" transform="translate(1,1)" stroke-linejoin="round"/><path d="M1395.0 781.00 L1904.0 781.00" fill="none" stroke="#3c9ad6" stroke-width="2.3" stroke-linejoin="round"/><line x1="1388" x2="1909" y1="781.5" y2="781.5" stroke="#7a7a7a" stroke-width="1"/><line x1="1441.5" x2="1441.5" y1="782" y2="787" stroke="#7a7a7a" stroke-width="1"/><text x="1440.7" y="794.6" text-anchor="middle" font-size="12" letter-spacing="0.25" font-family="Liberation Sans, sans-serif" fill="#1a1a1a">12:00</text><line x1="1526.5" x2="1526.5" y1="782" y2="787" stroke="#7a7a7a" stroke-width="1"/><text x="1526.5" y="794.6" text-anchor="middle" font-size="12" letter-spacing="0.25" font-family="Liberation Sans, sans-serif" fill="#1a1a1a">14:00</text><line x1="1613.5" x2="1613.5" y1="782" y2="787" stroke="#7a7a7a" stroke-width="1"/><text x="1613.2" y="794.6" text-anchor="middle" font-size="12" letter-spacing="0.25" font-family="Liberation Sans, sans-serif" fill="#1a1a1a">16:00</text><line x1="1699.5" x2="1699.5" y1="782" y2="787" stroke="#7a7a7a" stroke-width="1"/><text x="1698.9" y="794.6" text-anchor="middle" font-size="12" letter-spacing="0.25" font-family="Liberation Sans, sans-serif" fill="#1a1a1a">18:00</text><line x1="1785.5" x2="1785.5" y1="782" y2="787" stroke="#7a7a7a" stroke-width="1"/><text x="1784.6" y="794.6" text-anchor="middle" font-size="12" letter-spacing="0.25" font-family="Liberation Sans, sans-serif" fill="#1a1a1a">20:00</text><line x1="1871.5" x2="1871.5" y1="782" y2="787" stroke="#7a7a7a" stroke-width="1"/><text x="1871.0" y="794.6" text-anchor="middle" font-size="12" letter-spacing="0.25" font-family="Liberation Sans, sans-serif" fill="#1a1a1a">22:00</text><rect x="1493.2" y="806.3" width="196.29999999999995" height="25.200000000000045" rx="2" fill="#e4e4e4" stroke="#707070" stroke-width="1"/><line x1="1501" x2="1517" y1="820" y2="820" stroke="#3c9ad6" stroke-width="2"/><text x="1522" y="823.5" font-size="12" letter-spacing="0.05" font-family="Liberation Sans, sans-serif" fill="#1a1a1a">HTTP 404 Errors per Second</text></svg><svg style="position:absolute;left:1434px;top:75px" width="475" height="232" viewBox="1434 75 475 232"><defs><linearGradient id="g1434_75d" x1="0" x2="1" y1="0" y2="0"><stop offset="0" stop-color="#f5f5f5"/><stop offset="1" stop-color="#e0e0e0"/></linearGradient><linearGradient id="g1434_75l" x1="0" x2="1" y1="0" y2="0"><stop offset="0" stop-color="#f7f7f7"/><stop offset="1" stop-color="#fcfcfc"/></linearGradient></defs><rect x="1477" y="199" width="432" height="39" fill="url(#g1434_75l)"/><rect x="1477" y="159" width="432" height="40" fill="url(#g1434_75d)"/><rect x="1477" y="120" width="432" height="39" fill="url(#g1434_75l)"/><rect x="1477" y="80" width="432" height="40" fill="url(#g1434_75d)"/><line x1="1472" x2="1909" y1="80.5" y2="80.5" stroke="#cdcdcd" stroke-width="1"/><text x="1469" y="85" text-anchor="end" font-size="12" letter-spacing="0.2" font-family="Liberation Sans, sans-serif" fill="#1a1a1a">100%</text><line x1="1472" x2="1909" y1="120.5" y2="120.5" stroke="#cdcdcd" stroke-width="1"/><text x="1469" y="125" text-anchor="end" font-size="12" letter-spacing="0.2" font-family="Liberation Sans, sans-serif" fill="#1a1a1a">75%</text><line x1="1472" x2="1909" y1="159.5" y2="159.5" stroke="#cdcdcd" stroke-width="1"/><text x="1469" y="164" text-anchor="end" font-size="12" letter-spacing="0.2" font-family="Liberation Sans, sans-serif" fill="#1a1a1a">50%</text><line x1="1472" x2="1909" y1="199.5" y2="199.5" stroke="#cdcdcd" stroke-width="1"/><text x="1469" y="204" text-anchor="end" font-size="12" letter-spacing="0.2" font-family="Liberation Sans, sans-serif" fill="#1a1a1a">25%</text><line x1="1472" x2="1476" y1="238.5" y2="238.5" stroke="#cdcdcd" stroke-width="1"/><text x="1469" y="243" text-anchor="end" font-size="12" letter-spacing="0.2" font-family="Liberation Sans, sans-serif" fill="#1a1a1a">0%</text><line x1="1476.5" x2="1476.5" y1="80" y2="239" stroke="#c4c4c4" stroke-width="1"/><path d="M1481.0 238.00 L1487.0 238.00 L1490.0 84.74 L1493.0 233.26 L1499.0 238.00 L1505.0 238.00 L1511.0 233.26 L1514.0 233.26 L1517.0 238.00 L1519.8 173.22 L1522.6 219.04 L1526.0 236.42 L1534.0 238.00 L1537.0 234.84 L1540.0 238.00 L1546.4 238.00 L1549.4 215.88 L1552.4 238.00 L1558.4 238.00 L1561.5 143.20 L1564.5 238.00 L1567.5 87.90 L1570.0 80.00 L1573.5 234.84 L1576.5 238.00 L1579.0 94.22 L1582.0 236.42 L1585.6 238.00 L1587.8 238.00 L1590.6 189.02 L1593.6 238.00 L1596.7 206.40 L1599.7 238.00 L1605.7 238.00 L1608.7 219.04 L1611.7 238.00 L1640.9 238.00 L1643.9 233.26 L1646.9 238.00 L1650.0 238.00 L1656.0 238.00 L1674.0 238.00 L1676.7 89.48 L1682.7 238.00 L1685.7 219.04 L1688.7 233.26 L1691.8 238.00 L1694.8 233.26 L1697.0 236.42 L1700.5 219.04 L1703.0 238.00 L1706.0 151.10 L1709.0 238.00 L1720.0 238.00 L1724.2 125.82 L1727.2 238.00 L1730.2 238.00 L1733.2 151.10 L1738.3 97.38 L1741.9 105.28 L1745.3 238.00 L1748.3 225.36 L1751.3 238.00 L1756.4 238.00 L1759.4 138.46 L1762.4 238.00 L1765.4 219.04 L1768.4 80.00 L1771.4 168.48 L1774.5 80.00 L1780.5 238.00 L1786.5 236.42 L1789.5 238.00 L1792.2 140.04 L1795.6 238.00 L1801.2 89.48 L1807.6 222.20 L1810.7 238.00 L1815.7 238.00 L1818.7 223.78 L1821.7 238.00 L1839.8 238.00 L1842.8 219.04 L1845.8 238.00 L1857.0 236.42 L1860.0 238.00 L1863.3 187.44 L1866.4 234.84 L1869.0 162.16 L1872.0 238.00 L1875.0 222.20 L1878.0 238.00 L1884.0 236.42 L1887.0 238.00 L1893.0 234.84 L1896.0 234.84 L1899.0 238.00 L1904.0 238.00" fill="none" stroke="rgba(0,0,0,0.07)" stroke-width="3" transform="translate(1,1)" stroke-linejoin="round"/><path d="M1481.0 238.00 L1487.0 238.00 L1490.0 84.74 L1493.0 233.26 L1499.0 238.00 L1505.0 238.00 L1511.0 233.26 L1514.0 233.26 L1517.0 238.00 L1519.8 173.22 L1522.6 219.04 L1526.0 236.42 L1534.0 238.00 L1537.0 234.84 L1540.0 238.00 L1546.4 238.00 L1549.4 215.88 L1552.4 238.00 L1558.4 238.00 L1561.5 143.20 L1564.5 238.00 L1567.5 87.90 L1570.0 80.00 L1573.5 234.84 L1576.5 238.00 L1579.0 94.22 L1582.0 236.42 L1585.6 238.00 L1587.8 238.00 L1590.6 189.02 L1593.6 238.00 L1596.7 206.40 L1599.7 238.00 L1605.7 238.00 L1608.7 219.04 L1611.7 238.00 L1640.9 238.00 L1643.9 233.26 L1646.9 238.00 L1650.0 238.00 L1656.0 238.00 L1674.0 238.00 L1676.7 89.48 L1682.7 238.00 L1685.7 219.04 L1688.7 233.26 L1691.8 238.00 L1694.8 233.26 L1697.0 236.42 L1700.5 219.04 L1703.0 238.00 L1706.0 151.10 L1709.0 238.00 L1720.0 238.00 L1724.2 125.82 L1727.2 238.00 L1730.2 238.00 L1733.2 151.10 L1738.3 97.38 L1741.9 105.28 L1745.3 238.00 L1748.3 225.36 L1751.3 238.00 L1756.4 238.00 L1759.4 138.46 L1762.4 238.00 L1765.4 219.04 L1768.4 80.00 L1771.4 168.48 L1774.5 80.00 L1780.5 238.00 L1786.5 236.42 L1789.5 238.00 L1792.2 140.04 L1795.6 238.00 L1801.2 89.48 L1807.6 222.20 L1810.7 238.00 L1815.7 238.00 L1818.7 223.78 L1821.7 238.00 L1839.8 238.00 L1842.8 219.04 L1845.8 238.00 L1857.0 236.42 L1860.0 238.00 L1863.3 187.44 L1866.4 234.84 L1869.0 162.16 L1872.0 238.00 L1875.0 222.20 L1878.0 238.00 L1884.0 236.42 L1887.0 238.00 L1893.0 234.84 L1896.0 234.84 L1899.0 238.00 L1904.0 238.00" fill="none" stroke="#3c9ad6" stroke-width="2.3" stroke-linejoin="round"/><path d="M1481.0 150.11 L1485.0 151.73 L1490.1 149.10 L1494.1 152.53 L1498.1 151.12 L1502.1 150.11 L1507.2 146.47 L1511.2 153.14 L1514.2 151.12 L1518.2 151.73 L1522.2 149.71 L1526.3 153.14 L1531.3 149.10 L1535.3 151.12 L1540.3 148.49 L1544.4 151.12 L1549.4 152.53 L1553.4 150.11 L1558.4 147.69 L1561.5 153.14 L1565.5 150.11 L1569.5 152.53 L1572.5 151.12 L1576.5 153.75 L1580.6 150.11 L1585.6 151.73 L1590.6 149.10 L1594.6 152.53 L1599.7 149.10 L1603.7 152.53 L1608.7 151.12 L1613.7 149.71 L1617.8 146.07 L1620.8 153.75 L1625.8 150.11 L1629.8 152.53 L1634.9 150.51 L1638.9 152.13 L1642.9 150.11 L1647.9 153.75 L1654.0 146.47 L1656.0 154.15 L1661.0 152.53 L1666.0 149.10 L1671.1 145.66 L1675.1 153.14 L1679.1 151.12 L1683.1 153.14 L1687.1 149.71 L1690.0 150.11 L1694.0 151.12 L1699.0 149.10 L1706.1 147.69 L1712.1 154.15 L1717.1 152.53 L1720.2 151.12 L1724.2 149.10 L1728.2 152.53 L1732.2 150.11 L1734.2 153.75 L1739.3 151.12 L1744.3 148.09 L1748.3 153.14 L1752.3 151.12 L1757.4 152.13 L1761.4 151.12 L1765.4 153.14 L1769.4 151.73 L1774.5 152.53 L1778.5 150.11 L1783.5 148.49 L1786.5 152.53 L1790.5 150.11 L1794.6 151.12 L1798.6 148.49 L1802.6 151.12 L1806.6 152.13 L1810.7 150.11 L1815.7 152.53 L1821.7 149.10 L1825.7 154.15 L1830.8 152.53 L1836.8 149.10 L1842.8 153.75 L1848.9 151.12 L1852.9 152.13 L1856.9 150.51 L1862.9 149.71 L1867.0 152.53 L1875.0 149.10 L1879.0 153.75 L1885.1 152.53 L1890.1 148.49 L1893.1 151.73 L1897.1 150.11 L1901.1 153.14 L1904.2 152.13" fill="none" stroke="rgba(0,0,0,0.07)" stroke-width="3" transform="translate(1,1)" stroke-linejoin="round"/><path d="M1481.0 150.11 L1485.0 151.73 L1490.1 149.10 L1494.1 152.53 L1498.1 151.12 L1502.1 150.11 L1507.2 146.47 L1511.2 153.14 L1514.2 151.12 L1518.2 151.73 L1522.2 149.71 L1526.3 153.14 L1531.3 149.10 L1535.3 151.12 L1540.3 148.49 L1544.4 151.12 L1549.4 152.53 L1553.4 150.11 L1558.4 147.69 L1561.5 153.14 L1565.5 150.11 L1569.5 152.53 L1572.5 151.12 L1576.5 153.75 L1580.6 150.11 L1585.6 151.73 L1590.6 149.10 L1594.6 152.53 L1599.7 149.10 L1603.7 152.53 L1608.7 151.12 L1613.7 149.71 L1617.8 146.07 L1620.8 153.75 L1625.8 150.11 L1629.8 152.53 L1634.9 150.51 L1638.9 152.13 L1642.9 150.11 L1647.9 153.75 L1654.0 146.47 L1656.0 154.15 L1661.0 152.53 L1666.0 149.10 L1671.1 145.66 L1675.1 153.14 L1679.1 151.12 L1683.1 153.14 L1687.1 149.71 L1690.0 150.11 L1694.0 151.12 L1699.0 149.10 L1706.1 147.69 L1712.1 154.15 L1717.1 152.53 L1720.2 151.12 L1724.2 149.10 L1728.2 152.53 L1732.2 150.11 L1734.2 153.75 L1739.3 151.12 L1744.3 148.09 L1748.3 153.14 L1752.3 151.12 L1757.4 152.13 L1761.4 151.12 L1765.4 153.14 L1769.4 151.73 L1774.5 152.53 L1778.5 150.11 L1783.5 148.49 L1786.5 152.53 L1790.5 150.11 L1794.6 151.12 L1798.6 148.49 L1802.6 151.12 L1806.6 152.13 L1810.7 150.11 L1815.7 152.53 L1821.7 149.10 L1825.7 154.15 L1830.8 152.53 L1836.8 149.10 L1842.8 153.75 L1848.9 151.12 L1852.9 152.13 L1856.9 150.51 L1862.9 149.71 L1867.0 152.53 L1875.0 149.10 L1879.0 153.75 L1885.1 152.53 L1890.1 148.49 L1893.1 151.73 L1897.1 150.11 L1901.1 153.14 L1904.2 152.13" fill="none" stroke="#6cbf6a" stroke-width="2.3" stroke-linejoin="round"/><path d="M1481.0 183.60 L1485.0 184.25 L1490.1 183.20 L1494.1 184.57 L1498.1 184.00 L1502.1 183.60 L1507.2 182.14 L1511.2 184.81 L1514.2 184.00 L1518.2 184.25 L1522.2 183.44 L1526.3 184.81 L1531.3 183.20 L1535.3 184.00 L1540.3 182.95 L1544.4 184.00 L1549.4 184.57 L1553.4 183.60 L1558.4 182.63 L1561.5 184.81 L1565.5 183.60 L1569.5 184.57 L1572.5 184.00 L1576.5 185.05 L1580.6 183.60 L1585.6 184.25 L1590.6 183.20 L1594.6 184.57 L1599.7 183.20 L1603.7 184.57 L1608.7 184.00 L1613.7 183.44 L1617.8 181.98 L1620.8 185.05 L1625.8 183.60 L1629.8 184.57 L1634.9 183.76 L1638.9 184.41 L1642.9 183.60 L1647.9 185.05 L1654.0 182.14 L1656.0 185.22 L1661.0 184.57 L1666.0 183.20 L1671.1 181.82 L1675.1 184.81 L1679.1 184.00 L1683.1 184.81 L1687.1 183.44 L1690.0 183.60 L1694.0 184.00 L1699.0 183.20 L1706.1 182.63 L1712.1 185.22 L1717.1 184.57 L1720.2 184.00 L1724.2 183.20 L1728.2 184.57 L1732.2 183.60 L1734.2 185.05 L1739.3 184.00 L1744.3 182.79 L1748.3 184.81 L1752.3 184.00 L1757.4 184.41 L1761.4 184.00 L1765.4 184.81 L1769.4 184.25 L1774.5 184.57 L1778.5 183.60 L1783.5 182.95 L1786.5 184.57 L1790.5 183.60 L1794.6 184.00 L1798.6 182.95 L1802.6 184.00 L1806.6 184.41 L1810.7 183.60 L1815.7 184.57 L1821.7 183.20 L1825.7 185.22 L1830.8 184.57 L1836.8 183.20 L1842.8 185.05 L1848.9 184.00 L1852.9 184.41 L1856.9 183.76 L1862.9 183.44 L1867.0 184.57 L1875.0 183.20 L1879.0 185.05 L1885.1 184.57 L1890.1 182.95 L1893.1 184.25 L1897.1 183.60 L1901.1 184.81 L1904.2 184.41" fill="none" stroke="rgba(0,0,0,0.07)" stroke-width="3" transform="translate(1,1)" stroke-linejoin="round"/><path d="M1481.0 183.60 L1485.0 184.25 L1490.1 183.20 L1494.1 184.57 L1498.1 184.00 L1502.1 183.60 L1507.2 182.14 L1511.2 184.81 L1514.2 184.00 L1518.2 184.25 L1522.2 183.44 L1526.3 184.81 L1531.3 183.20 L1535.3 184.00 L1540.3 182.95 L1544.4 184.00 L1549.4 184.57 L1553.4 183.60 L1558.4 182.63 L1561.5 184.81 L1565.5 183.60 L1569.5 184.57 L1572.5 184.00 L1576.5 185.05 L1580.6 183.60 L1585.6 184.25 L1590.6 183.20 L1594.6 184.57 L1599.7 183.20 L1603.7 184.57 L1608.7 184.00 L1613.7 183.44 L1617.8 181.98 L1620.8 185.05 L1625.8 183.60 L1629.8 184.57 L1634.9 183.76 L1638.9 184.41 L1642.9 183.60 L1647.9 185.05 L1654.0 182.14 L1656.0 185.22 L1661.0 184.57 L1666.0 183.20 L1671.1 181.82 L1675.1 184.81 L1679.1 184.00 L1683.1 184.81 L1687.1 183.44 L1690.0 183.60 L1694.0 184.00 L1699.0 183.20 L1706.1 182.63 L1712.1 185.22 L1717.1 184.57 L1720.2 184.00 L1724.2 183.20 L1728.2 184.57 L1732.2 183.60 L1734.2 185.05 L1739.3 184.00 L1744.3 182.79 L1748.3 184.81 L1752.3 184.00 L1757.4 184.41 L1761.4 184.00 L1765.4 184.81 L1769.4 184.25 L1774.5 184.57 L1778.5 183.60 L1783.5 182.95 L1786.5 184.57 L1790.5 183.60 L1794.6 184.00 L1798.6 182.95 L1802.6 184.00 L1806.6 184.41 L1810.7 183.60 L1815.7 184.57 L1821.7 183.20 L1825.7 185.22 L1830.8 184.57 L1836.8 183.20 L1842.8 185.05 L1848.9 184.00 L1852.9 184.41 L1856.9 183.76 L1862.9 183.44 L1867.0 184.57 L1875.0 183.20 L1879.0 185.05 L1885.1 184.57 L1890.1 182.95 L1893.1 184.25 L1897.1 183.60 L1901.1 184.81 L1904.2 184.41" fill="none" stroke="#d8c81a" stroke-width="2.3" stroke-linejoin="round"/><line x1="1476" x2="1909" y1="238.5" y2="238.5" stroke="#7a7a7a" stroke-width="1"/><line x1="1520.5" x2="1520.5" y1="239" y2="244" stroke="#7a7a7a" stroke-width="1"/><text x="1520.0" y="251.6" text-anchor="middle" font-size="12" letter-spacing="0.25" font-family="Liberation Sans, sans-serif" fill="#1a1a1a">12:00</text><line x1="1627.5" x2="1627.5" y1="239" y2="244" stroke="#7a7a7a" stroke-width="1"/><text x="1627.0" y="251.6" text-anchor="middle" font-size="12" letter-spacing="0.25" font-family="Liberation Sans, sans-serif" fill="#1a1a1a">15:00</text><line x1="1733.5" x2="1733.5" y1="239" y2="244" stroke="#7a7a7a" stroke-width="1"/><text x="1732.9" y="251.6" text-anchor="middle" font-size="12" letter-spacing="0.25" font-family="Liberation Sans, sans-serif" fill="#1a1a1a">18:00</text><line x1="1839.5" x2="1839.5" y1="239" y2="244" stroke="#7a7a7a" stroke-width="1"/><text x="1839.0" y="251.6" text-anchor="middle" font-size="12" letter-spacing="0.25" font-family="Liberation Sans, sans-serif" fill="#1a1a1a">21:00</text><rect x="1509.2" y="263.4" width="323.0" height="39.60000000000002" rx="2" fill="#e4e4e4" stroke="#707070" stroke-width="1"/><line x1="1517" x2="1533" y1="277" y2="277" stroke="#3c9ad6" stroke-width="2"/><text x="1538" y="280.5" font-size="12" letter-spacing="0.05" font-family="Liberation Sans, sans-serif" fill="#1a1a1a">08r2ent-ex-ca-1: CPU</text><line x1="1667" x2="1683" y1="277" y2="277" stroke="#6cbf6a" stroke-width="2"/><text x="1688" y="280.5" font-size="12" letter-spacing="0.05" font-family="Liberation Sans, sans-serif" fill="#1a1a1a">08r2ent-ex-ca-1: Memory</text><line x1="1517" x2="1533" y1="292" y2="292" stroke="#d8c81a" stroke-width="2"/><text x="1538" y="295.5" font-size="12" letter-spacing="0.05" font-family="Liberation Sans, sans-serif" fill="#1a1a1a">08r2ent-ex-ca-1: Swap</text></svg></body></html>
